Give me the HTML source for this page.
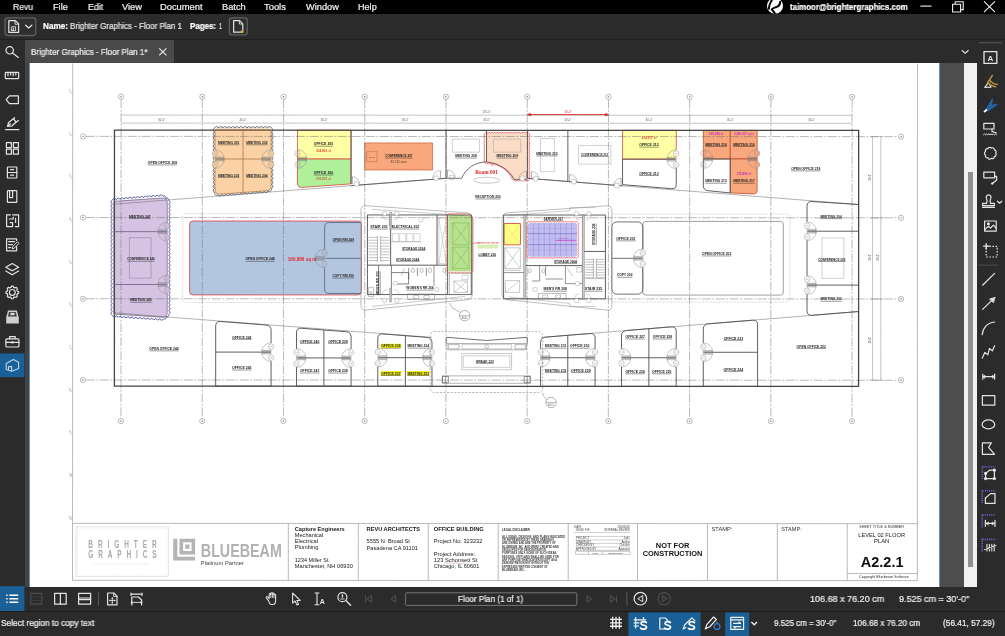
<!DOCTYPE html>
<html lang="en"><head><meta charset="utf-8"><title>Brighter Graphics - Floor Plan 1 - Revu</title>
<style>
html,body{margin:0;padding:0;background:#2b2b2b;}
body{width:1005px;height:636px;position:relative;overflow:hidden;font-family:"Liberation Sans",sans-serif;}
.abs{position:absolute;}
.ut{position:absolute;will-change:transform;-webkit-text-stroke:0.22px currentColor;white-space:pre;line-height:1;transform-origin:0 50%;display:inline-block;}
#menubar{left:0;top:0;width:1005px;height:13.5px;background:#000;}
#toolbar{left:0;top:13.5px;width:1005px;height:25px;background:#2b2b2b;}
#tbline{left:0;top:38.5px;width:1005px;height:1.4px;background:#1f1f1f;}
#tabbar{left:25px;top:40px;width:952.5px;height:23.4px;background:#2b2b2b;}
#tab{left:25px;top:39.8px;width:149px;height:23.6px;background:#4a4a4a;}
#leftpanel{left:0;top:40px;width:24.6px;height:547px;background:#2b2b2b;}
#docframe{left:24.6px;top:63.4px;width:4.2px;height:523.6px;background:#444;}
#doc{left:28.8px;top:63.4px;width:910.4px;height:523.6px;background:#fff;overflow:hidden;}
#docl{left:28.8px;top:63.4px;width:1.2px;height:523.6px;background:#5b93c4;}
#docr{left:938.8px;top:63.4px;width:1.2px;height:523.6px;background:#5b93c4;}
#grayarea{left:940px;top:63.4px;width:23.8px;height:523.6px;background:#4d4d4d;}
#vscroll{left:963.8px;top:63.4px;width:13.6px;height:523.6px;background:#f1f1f1;}
#vthumb{left:968.4px;top:171.6px;width:4.8px;height:395px;background:#909090;}
#rightpanel{left:977.4px;top:40px;width:27.6px;height:547px;background:#2b2b2b;}
#navbar{left:0;top:587px;width:1005px;height:24px;background:#2b2b2b;}
#navline{left:0;top:611px;width:1005px;height:1.4px;background:#1c1c1c;}
#statusbar{left:0;top:612.4px;width:1005px;height:23.6px;background:#2b2b2b;}
svg.ov{position:absolute;left:0;top:0;will-change:transform;}
#drawing{filter:blur(0.35px);}
</style></head>
<body>
<div class="abs" id="menubar"></div>
<div class="abs" id="toolbar"></div>
<div class="abs" id="tbline"></div>
<div class="abs" id="tabbar"></div>
<div class="abs" id="tab"></div>
<div class="abs" id="leftpanel"></div>
<div class="abs" id="docframe"></div>
<div class="abs" id="doc"></div>
<div class="abs" id="grayarea"></div>
<div class="abs" id="vscroll"></div>
<div class="abs" id="vthumb"></div>
<div class="abs" id="rightpanel"></div>
<div class="abs" id="navbar"></div>
<div class="abs" id="navline"></div>
<div class="abs" id="statusbar"></div>
<svg class="ov" id="drawing" width="1005" height="636" viewBox="0 0 1005 636">
<defs><clipPath id="docclip"><rect x="30" y="63.4" width="908.8" height="523.6"/></clipPath></defs>
<g clip-path="url(#docclip)"><g transform="rotate(0.02 502 318)">
<line x1="72.6" y1="63" x2="72.6" y2="580.6" stroke="#8c8c8c" stroke-width="0.6" />
<line x1="917.4" y1="63" x2="917.4" y2="580.6" stroke="#8c8c8c" stroke-width="0.6" />
<line x1="70.4" y1="92.8" x2="72.6" y2="92.8" stroke="#8c8c8c" stroke-width="0.5" />
<text x="69.2" y="92.2" font-family="Liberation Sans, sans-serif" font-size="2.6" fill="#777">1</text>
<line x1="70.4" y1="135.45" x2="72.6" y2="135.45" stroke="#8c8c8c" stroke-width="0.5" />
<text x="69.2" y="134.85" font-family="Liberation Sans, sans-serif" font-size="2.6" fill="#777">2</text>
<line x1="70.4" y1="178.1" x2="72.6" y2="178.1" stroke="#8c8c8c" stroke-width="0.5" />
<text x="69.2" y="177.5" font-family="Liberation Sans, sans-serif" font-size="2.6" fill="#777">3</text>
<line x1="70.4" y1="220.75" x2="72.6" y2="220.75" stroke="#8c8c8c" stroke-width="0.5" />
<text x="69.2" y="220.15" font-family="Liberation Sans, sans-serif" font-size="2.6" fill="#777">4</text>
<line x1="70.4" y1="263.4" x2="72.6" y2="263.4" stroke="#8c8c8c" stroke-width="0.5" />
<text x="69.2" y="262.8" font-family="Liberation Sans, sans-serif" font-size="2.6" fill="#777">5</text>
<line x1="70.4" y1="306.05" x2="72.6" y2="306.05" stroke="#8c8c8c" stroke-width="0.5" />
<text x="69.2" y="305.45" font-family="Liberation Sans, sans-serif" font-size="2.6" fill="#777">6</text>
<line x1="70.4" y1="348.7" x2="72.6" y2="348.7" stroke="#8c8c8c" stroke-width="0.5" />
<text x="69.2" y="348.1" font-family="Liberation Sans, sans-serif" font-size="2.6" fill="#777">7</text>
<line x1="70.4" y1="391.35" x2="72.6" y2="391.35" stroke="#8c8c8c" stroke-width="0.5" />
<text x="69.2" y="390.75" font-family="Liberation Sans, sans-serif" font-size="2.6" fill="#777">8</text>
<line x1="70.4" y1="434" x2="72.6" y2="434" stroke="#8c8c8c" stroke-width="0.5" />
<text x="69.2" y="433.4" font-family="Liberation Sans, sans-serif" font-size="2.6" fill="#777">9</text>
<line x1="70.4" y1="476.65" x2="72.6" y2="476.65" stroke="#8c8c8c" stroke-width="0.5" />
<text x="69.2" y="476.05" font-family="Liberation Sans, sans-serif" font-size="2.6" fill="#777">10</text>
<line x1="70.4" y1="519.3" x2="72.6" y2="519.3" stroke="#8c8c8c" stroke-width="0.5" />
<text x="69.2" y="518.7" font-family="Liberation Sans, sans-serif" font-size="2.6" fill="#777">11</text>
<path d="M214.9 130.6Q214.9 128.6 216.9 128.6L269.1 128.6Q271.1 128.6 271.1 130.6L271.1 185.51Q271.1 190.51 266.11 190.88L219.89 194.26Q214.9 194.62 214.9 189.62Z" fill="#fbd2a6" stroke="none" stroke-width="0" />
<rect x="297.4" y="130.3" width="53.6" height="28.8" rx="0" fill="#ffffa6" stroke="#d84a3a" stroke-width="0.8" />
<path d="M297.4 159.1L351 159.1L351 183.95L301.89 187.43Q297.4 187.75 297.4 183.25Z" fill="#b0f09a" stroke="#d84a3a" stroke-width="0.8" />
<rect x="364.6" y="143" width="67.9" height="27" rx="0" fill="#f9a77c" stroke="#cf5a3a" stroke-width="0.7" />
<path d="M486.5 133.6H527.6V179.4H514.2C509 170 499 163 486.5 162Z" fill="#fbdcc6" stroke="none" stroke-width="0" />
<rect x="622.5" y="130.3" width="53.7" height="28.8" rx="0" fill="#ffffa6" stroke="#d84a3a" stroke-width="0.8" />
<rect x="703.3" y="130.3" width="26.9" height="28.6" rx="0" fill="#f9a77c" stroke="#b9502a" stroke-width="0.8" />
<rect x="730.2" y="130.3" width="26.9" height="28.6" rx="0" fill="#f9a77c" stroke="#b9502a" stroke-width="0.8" />
<path d="M730.2 158.9L757.1 158.9L757.1 189.99Q757.1 193.99 753.1 193.83L730.2 192.87Z" fill="#f9a77c" stroke="#b9502a" stroke-width="0.8" />
<path d="M113.8 202.05Q113.8 201.55 114.3 201.51L162.21 198.11Q167.2 197.76 167.2 202.76L167.2 312.67Q167.2 317.67 162.21 317.34L114.3 314.19Q113.8 314.15 113.8 313.65Z" fill="#d6c3e3" stroke="none" stroke-width="0" />
<rect x="189.6" y="221.1" width="171.8" height="73.9" rx="3.4" fill="#b3c6e0" stroke="#d64040" stroke-width="0.8" />
<path d="M448.6 215L466.8 215Q471.8 215 471.8 220L471.8 271.2L448.6 271.2Z" fill="#b7e18d" stroke="none" stroke-width="0" />
<rect x="504" y="223.5" width="16.5" height="21.3" rx="0" fill="#ffff84" stroke="#e03a2a" stroke-width="0.8" />
<rect x="527.8" y="222.9" width="49.2" height="33.9" rx="2" fill="#c3bdf2" stroke="none" stroke-width="0" />
<rect x="477.4" y="244.4" width="21" height="4.2" rx="0" fill="#d6efb8" stroke="none" stroke-width="0" />
<line x1="121" y1="99.4" x2="121" y2="418.4" stroke="#707070" stroke-width="0.5" stroke-dasharray="9 1.6 1.8 1.6"/>
<circle cx="121" cy="96.8" r="2.6" fill="none" stroke="#777" stroke-width="0.5"/>
<circle cx="121" cy="421.1" r="2.6" fill="none" stroke="#777" stroke-width="0.5"/>
<circle cx="121" cy="96.8" r="0.7" fill="#666" stroke="none" stroke-width="0"/>
<circle cx="121" cy="421.1" r="0.7" fill="#666" stroke="none" stroke-width="0"/>
<line x1="202.23" y1="99.4" x2="202.23" y2="418.4" stroke="#707070" stroke-width="0.5" stroke-dasharray="9 1.6 1.8 1.6"/>
<circle cx="202.23" cy="96.8" r="2.6" fill="none" stroke="#777" stroke-width="0.5"/>
<circle cx="202.23" cy="421.1" r="2.6" fill="none" stroke="#777" stroke-width="0.5"/>
<circle cx="202.23" cy="96.8" r="0.7" fill="#666" stroke="none" stroke-width="0"/>
<circle cx="202.23" cy="421.1" r="0.7" fill="#666" stroke="none" stroke-width="0"/>
<line x1="283.46" y1="99.4" x2="283.46" y2="418.4" stroke="#707070" stroke-width="0.5" stroke-dasharray="9 1.6 1.8 1.6"/>
<circle cx="283.46" cy="96.8" r="2.6" fill="none" stroke="#777" stroke-width="0.5"/>
<circle cx="283.46" cy="421.1" r="2.6" fill="none" stroke="#777" stroke-width="0.5"/>
<circle cx="283.46" cy="96.8" r="0.7" fill="#666" stroke="none" stroke-width="0"/>
<circle cx="283.46" cy="421.1" r="0.7" fill="#666" stroke="none" stroke-width="0"/>
<line x1="364.69" y1="99.4" x2="364.69" y2="418.4" stroke="#707070" stroke-width="0.5" stroke-dasharray="9 1.6 1.8 1.6"/>
<circle cx="364.69" cy="96.8" r="2.6" fill="none" stroke="#777" stroke-width="0.5"/>
<circle cx="364.69" cy="421.1" r="2.6" fill="none" stroke="#777" stroke-width="0.5"/>
<circle cx="364.69" cy="96.8" r="0.7" fill="#666" stroke="none" stroke-width="0"/>
<circle cx="364.69" cy="421.1" r="0.7" fill="#666" stroke="none" stroke-width="0"/>
<line x1="445.92" y1="99.4" x2="445.92" y2="418.4" stroke="#707070" stroke-width="0.5" stroke-dasharray="9 1.6 1.8 1.6"/>
<circle cx="445.92" cy="96.8" r="2.6" fill="none" stroke="#777" stroke-width="0.5"/>
<circle cx="445.92" cy="421.1" r="2.6" fill="none" stroke="#777" stroke-width="0.5"/>
<circle cx="445.92" cy="96.8" r="0.7" fill="#666" stroke="none" stroke-width="0"/>
<circle cx="445.92" cy="421.1" r="0.7" fill="#666" stroke="none" stroke-width="0"/>
<line x1="527.15" y1="99.4" x2="527.15" y2="418.4" stroke="#707070" stroke-width="0.5" stroke-dasharray="9 1.6 1.8 1.6"/>
<circle cx="527.15" cy="96.8" r="2.6" fill="none" stroke="#777" stroke-width="0.5"/>
<circle cx="527.15" cy="421.1" r="2.6" fill="none" stroke="#777" stroke-width="0.5"/>
<circle cx="527.15" cy="96.8" r="0.7" fill="#666" stroke="none" stroke-width="0"/>
<circle cx="527.15" cy="421.1" r="0.7" fill="#666" stroke="none" stroke-width="0"/>
<line x1="608.38" y1="99.4" x2="608.38" y2="418.4" stroke="#707070" stroke-width="0.5" stroke-dasharray="9 1.6 1.8 1.6"/>
<circle cx="608.38" cy="96.8" r="2.6" fill="none" stroke="#777" stroke-width="0.5"/>
<circle cx="608.38" cy="421.1" r="2.6" fill="none" stroke="#777" stroke-width="0.5"/>
<circle cx="608.38" cy="96.8" r="0.7" fill="#666" stroke="none" stroke-width="0"/>
<circle cx="608.38" cy="421.1" r="0.7" fill="#666" stroke="none" stroke-width="0"/>
<line x1="689.61" y1="99.4" x2="689.61" y2="418.4" stroke="#707070" stroke-width="0.5" stroke-dasharray="9 1.6 1.8 1.6"/>
<circle cx="689.61" cy="96.8" r="2.6" fill="none" stroke="#777" stroke-width="0.5"/>
<circle cx="689.61" cy="421.1" r="2.6" fill="none" stroke="#777" stroke-width="0.5"/>
<circle cx="689.61" cy="96.8" r="0.7" fill="#666" stroke="none" stroke-width="0"/>
<circle cx="689.61" cy="421.1" r="0.7" fill="#666" stroke="none" stroke-width="0"/>
<line x1="770.84" y1="99.4" x2="770.84" y2="418.4" stroke="#707070" stroke-width="0.5" stroke-dasharray="9 1.6 1.8 1.6"/>
<circle cx="770.84" cy="96.8" r="2.6" fill="none" stroke="#777" stroke-width="0.5"/>
<circle cx="770.84" cy="421.1" r="2.6" fill="none" stroke="#777" stroke-width="0.5"/>
<circle cx="770.84" cy="96.8" r="0.7" fill="#666" stroke="none" stroke-width="0"/>
<circle cx="770.84" cy="421.1" r="0.7" fill="#666" stroke="none" stroke-width="0"/>
<line x1="852.07" y1="99.4" x2="852.07" y2="418.4" stroke="#707070" stroke-width="0.5" stroke-dasharray="9 1.6 1.8 1.6"/>
<circle cx="852.07" cy="96.8" r="2.6" fill="none" stroke="#777" stroke-width="0.5"/>
<circle cx="852.07" cy="421.1" r="2.6" fill="none" stroke="#777" stroke-width="0.5"/>
<circle cx="852.07" cy="96.8" r="0.7" fill="#666" stroke="none" stroke-width="0"/>
<circle cx="852.07" cy="421.1" r="0.7" fill="#666" stroke="none" stroke-width="0"/>
<line x1="85.8" y1="136.5" x2="898.2" y2="136.5" stroke="#707070" stroke-width="0.5" stroke-dasharray="9 1.6 1.8 1.6"/>
<circle cx="83" cy="136.5" r="2.6" fill="none" stroke="#777" stroke-width="0.5"/>
<circle cx="901" cy="136.5" r="2.6" fill="none" stroke="#777" stroke-width="0.5"/>
<circle cx="83" cy="136.5" r="0.7" fill="#666" stroke="none" stroke-width="0"/>
<circle cx="901" cy="136.5" r="0.7" fill="#666" stroke="none" stroke-width="0"/>
<line x1="85.8" y1="217.7" x2="898.2" y2="217.7" stroke="#707070" stroke-width="0.5" stroke-dasharray="9 1.6 1.8 1.6"/>
<circle cx="83" cy="217.7" r="2.6" fill="none" stroke="#777" stroke-width="0.5"/>
<circle cx="901" cy="217.7" r="2.6" fill="none" stroke="#777" stroke-width="0.5"/>
<circle cx="83" cy="217.7" r="0.7" fill="#666" stroke="none" stroke-width="0"/>
<circle cx="901" cy="217.7" r="0.7" fill="#666" stroke="none" stroke-width="0"/>
<line x1="85.8" y1="298.9" x2="898.2" y2="298.9" stroke="#707070" stroke-width="0.5" stroke-dasharray="9 1.6 1.8 1.6"/>
<circle cx="83" cy="298.9" r="2.6" fill="none" stroke="#777" stroke-width="0.5"/>
<circle cx="901" cy="298.9" r="2.6" fill="none" stroke="#777" stroke-width="0.5"/>
<circle cx="83" cy="298.9" r="0.7" fill="#666" stroke="none" stroke-width="0"/>
<circle cx="901" cy="298.9" r="0.7" fill="#666" stroke="none" stroke-width="0"/>
<line x1="85.8" y1="380.1" x2="898.2" y2="380.1" stroke="#707070" stroke-width="0.5" stroke-dasharray="9 1.6 1.8 1.6"/>
<circle cx="83" cy="380.1" r="2.6" fill="none" stroke="#777" stroke-width="0.5"/>
<circle cx="901" cy="380.1" r="2.6" fill="none" stroke="#777" stroke-width="0.5"/>
<circle cx="83" cy="380.1" r="0.7" fill="#666" stroke="none" stroke-width="0"/>
<circle cx="901" cy="380.1" r="0.7" fill="#666" stroke="none" stroke-width="0"/>
<line x1="121" y1="115.2" x2="852.07" y2="115.2" stroke="#888" stroke-width="0.5" />
<line x1="121" y1="123.2" x2="852.07" y2="123.2" stroke="#888" stroke-width="0.5" />
<g><text x="158.25" y="121.05" font-family="Liberation Sans, sans-serif" font-size="3" font-weight="400" fill="#555" textLength="6.72" lengthAdjust="spacingAndGlyphs">30'-0"</text></g>
<g><text x="239.49" y="121.05" font-family="Liberation Sans, sans-serif" font-size="3" font-weight="400" fill="#555" textLength="6.72" lengthAdjust="spacingAndGlyphs">30'-0"</text></g>
<g><text x="320.72" y="121.05" font-family="Liberation Sans, sans-serif" font-size="3" font-weight="400" fill="#555" textLength="6.72" lengthAdjust="spacingAndGlyphs">30'-0"</text></g>
<g><text x="401.94" y="121.05" font-family="Liberation Sans, sans-serif" font-size="3" font-weight="400" fill="#555" textLength="6.72" lengthAdjust="spacingAndGlyphs">30'-0"</text></g>
<g><text x="483.18" y="121.05" font-family="Liberation Sans, sans-serif" font-size="3" font-weight="400" fill="#555" textLength="6.72" lengthAdjust="spacingAndGlyphs">30'-0"</text></g>
<g><text x="564.41" y="121.05" font-family="Liberation Sans, sans-serif" font-size="3" font-weight="400" fill="#555" textLength="6.72" lengthAdjust="spacingAndGlyphs">30'-0"</text></g>
<g><text x="645.63" y="121.05" font-family="Liberation Sans, sans-serif" font-size="3" font-weight="400" fill="#555" textLength="6.72" lengthAdjust="spacingAndGlyphs">30'-0"</text></g>
<g><text x="726.87" y="121.05" font-family="Liberation Sans, sans-serif" font-size="3" font-weight="400" fill="#555" textLength="6.72" lengthAdjust="spacingAndGlyphs">30'-0"</text></g>
<g><text x="808.1" y="121.05" font-family="Liberation Sans, sans-serif" font-size="3" font-weight="400" fill="#555" textLength="6.72" lengthAdjust="spacingAndGlyphs">30'-0"</text></g>
<g><text x="482.58" y="113.05" font-family="Liberation Sans, sans-serif" font-size="3" font-weight="400" fill="#555" textLength="7.84" lengthAdjust="spacingAndGlyphs">270'-0"</text></g>
<line x1="872.5" y1="136.5" x2="872.5" y2="380.1" stroke="#888" stroke-width="0.5" />
<line x1="880.8" y1="136.5" x2="880.8" y2="380.1" stroke="#888" stroke-width="0.5" />
<line x1="870.5" y1="136.5" x2="883" y2="136.5" stroke="#888" stroke-width="0.5" />
<line x1="870.5" y1="217.7" x2="883" y2="217.7" stroke="#888" stroke-width="0.5" />
<line x1="870.5" y1="298.9" x2="883" y2="298.9" stroke="#888" stroke-width="0.5" />
<line x1="870.5" y1="380.1" x2="883" y2="380.1" stroke="#888" stroke-width="0.5" />
<g transform="rotate(-90 870 177)"><text x="866.64" y="177.85" font-family="Liberation Sans, sans-serif" font-size="3" font-weight="400" fill="#555" textLength="6.72" lengthAdjust="spacingAndGlyphs">30'-0"</text></g>
<g transform="rotate(-90 870 257)"><text x="866.64" y="257.85" font-family="Liberation Sans, sans-serif" font-size="3" font-weight="400" fill="#555" textLength="6.72" lengthAdjust="spacingAndGlyphs">30'-0"</text></g>
<g transform="rotate(-90 870 340)"><text x="866.64" y="340.85" font-family="Liberation Sans, sans-serif" font-size="3" font-weight="400" fill="#555" textLength="6.72" lengthAdjust="spacingAndGlyphs">30'-0"</text></g>
<g transform="rotate(-90 878.4 257)"><text x="875.04" y="257.85" font-family="Liberation Sans, sans-serif" font-size="3" font-weight="400" fill="#555" textLength="6.72" lengthAdjust="spacingAndGlyphs">90'-0"</text></g>
<line x1="527.4" y1="114.6" x2="608.4" y2="114.6" stroke="#e02020" stroke-width="0.9" />
<path d="M527.2 114.6L530.6 113.2V116Z M608.6 114.6L605.2 113.2V116Z" fill="#e02020" stroke="#e02020" stroke-width="0.4" />
<g><text x="564.4" y="113.45" font-family="Liberation Sans, sans-serif" font-size="3" font-weight="400" fill="#e03030" textLength="7.2" lengthAdjust="spacingAndGlyphs">30'-0"</text></g>
<rect x="114.4" y="130.3" width="744.2" height="256" rx="0" fill="none" stroke="#444" stroke-width="1.3" />
<line x1="114.4" y1="204.3" x2="446" y2="178.3" stroke="#666" stroke-width="0.5" />
<line x1="527.5" y1="178.3" x2="858.5" y2="204.38" stroke="#666" stroke-width="0.5" />
<line x1="114.4" y1="313" x2="432" y2="337.49" stroke="#666" stroke-width="0.5" />
<line x1="541" y1="337.5" x2="858.5" y2="311.4" stroke="#666" stroke-width="0.5" />
<path d="M214.9 130.3L271.1 130.3L271.1 185.51Q271.1 190.51 266.11 190.88L219.89 194.26Q214.9 194.62 214.9 189.62Z" fill="none" stroke="#a87848" stroke-width="0.8" />
<line x1="243" y1="130.3" x2="243" y2="192.62" stroke="#a87848" stroke-width="0.8" />
<line x1="214.9" y1="159.1" x2="271.1" y2="159.1" stroke="#a87848" stroke-width="0.8" />
<path d="M214.6 128.2A2.13 2.13 0 0 1 218.66 128.2A2.13 2.13 0 0 1 222.71 128.2A2.13 2.13 0 0 1 226.77 128.2A2.13 2.13 0 0 1 230.83 128.2A2.13 2.13 0 0 1 234.89 128.2A2.13 2.13 0 0 1 238.94 128.2A2.13 2.13 0 0 1 243 128.2A2.13 2.13 0 0 1 247.06 128.2A2.13 2.13 0 0 1 251.11 128.2A2.13 2.13 0 0 1 255.17 128.2A2.13 2.13 0 0 1 259.23 128.2A2.13 2.13 0 0 1 263.29 128.2A2.13 2.13 0 0 1 267.34 128.2A2.13 2.13 0 0 1 271.4 128.2A2.11 2.11 0 0 1 271.4 132.22A2.11 2.11 0 0 1 271.4 136.24A2.11 2.11 0 0 1 271.4 140.26A2.11 2.11 0 0 1 271.4 144.28A2.11 2.11 0 0 1 271.4 148.3A2.11 2.11 0 0 1 271.4 152.32A2.11 2.11 0 0 1 271.4 156.34A2.11 2.11 0 0 1 271.4 160.36A2.11 2.11 0 0 1 271.4 164.37A2.11 2.11 0 0 1 271.4 168.39A2.11 2.11 0 0 1 271.4 172.41A2.11 2.11 0 0 1 271.4 176.43A2.11 2.11 0 0 1 271.4 180.45A2.11 2.11 0 0 1 271.4 184.47A2.11 2.11 0 0 1 271.4 188.49A2.24 2.24 0 0 1 268 191.06A2.03 2.03 0 0 1 264.15 191.36A2.03 2.03 0 0 1 260.31 191.66A2.03 2.03 0 0 1 256.46 191.96A2.03 2.03 0 0 1 252.62 192.26A2.03 2.03 0 0 1 248.77 192.57A2.03 2.03 0 0 1 244.92 192.87A2.03 2.03 0 0 1 241.08 193.17A2.03 2.03 0 0 1 237.23 193.47A2.03 2.03 0 0 1 233.38 193.77A2.03 2.03 0 0 1 229.54 194.07A2.03 2.03 0 0 1 225.69 194.37A2.03 2.03 0 0 1 221.85 194.68A2.03 2.03 0 0 1 218 194.98A2.23 2.23 0 0 1 214.6 192.44A2.11 2.11 0 0 1 214.6 188.43A2.11 2.11 0 0 1 214.6 184.41A2.11 2.11 0 0 1 214.6 180.4A2.11 2.11 0 0 1 214.6 176.38A2.11 2.11 0 0 1 214.6 172.37A2.11 2.11 0 0 1 214.6 168.35A2.11 2.11 0 0 1 214.6 164.34A2.11 2.11 0 0 1 214.6 160.32A2.11 2.11 0 0 1 214.6 156.31A2.11 2.11 0 0 1 214.6 152.29A2.11 2.11 0 0 1 214.6 148.28A2.11 2.11 0 0 1 214.6 144.26A2.11 2.11 0 0 1 214.6 140.25A2.11 2.11 0 0 1 214.6 136.23A2.11 2.11 0 0 1 214.6 132.22A2.11 2.11 0 0 1 214.6 128.2" fill="none" stroke="#5a5262" stroke-width="0.8" />
<line x1="214.9" y1="150" x2="214.9" y2="168.2" stroke="#fbd2a6" stroke-width="1.8" /><path d="M214.9 149.7A9.4 9.4 0 0 1 214.9 168.5" fill="none" stroke="#8a8a8a" stroke-width="0.5" /><rect x="214.9" y="157.1" width="9" height="4" rx="0" fill="rgba(110,110,110,0.38)" stroke="#888" stroke-width="0.35" /><line x1="214.9" y1="159.1" x2="223.9" y2="159.1" stroke="#888" stroke-width="0.5" /><circle cx="214.9" cy="153.5" r="2.7" fill="#fbd2a6" stroke="#8a8a8a" stroke-width="0.45"/><circle cx="214.9" cy="164.7" r="2.7" fill="#fbd2a6" stroke="#8a8a8a" stroke-width="0.45"/><line x1="213.5" y1="153.5" x2="216.3" y2="153.5" stroke="#999" stroke-width="0.5" /><line x1="213.5" y1="164.7" x2="216.3" y2="164.7" stroke="#999" stroke-width="0.5" />
<line x1="271.1" y1="150" x2="271.1" y2="168.2" stroke="#fbd2a6" stroke-width="1.8" /><path d="M271.1 149.7A9.4 9.4 0 0 0 271.1 168.5" fill="none" stroke="#8a8a8a" stroke-width="0.5" /><rect x="262.1" y="157.1" width="9" height="4" rx="0" fill="rgba(110,110,110,0.38)" stroke="#888" stroke-width="0.35" /><line x1="262.1" y1="159.1" x2="271.1" y2="159.1" stroke="#888" stroke-width="0.5" /><circle cx="271.1" cy="153.5" r="2.7" fill="#fbd2a6" stroke="#8a8a8a" stroke-width="0.45"/><circle cx="271.1" cy="164.7" r="2.7" fill="#fbd2a6" stroke="#8a8a8a" stroke-width="0.45"/><line x1="269.7" y1="153.5" x2="272.5" y2="153.5" stroke="#999" stroke-width="0.5" /><line x1="269.7" y1="164.7" x2="272.5" y2="164.7" stroke="#999" stroke-width="0.5" />
<path d="M297.4 149.7A9.4 9.4 0 0 1 297.4 168.5" fill="none" stroke="#8a8a8a" stroke-width="0.5" /><rect x="297.4" y="157.1" width="9" height="4" rx="0" fill="rgba(110,110,110,0.38)" stroke="#888" stroke-width="0.35" /><line x1="297.4" y1="159.1" x2="306.4" y2="159.1" stroke="#888" stroke-width="0.5" /><circle cx="297.4" cy="153.5" r="2.7" fill="none" stroke="#8a8a8a" stroke-width="0.45"/><circle cx="297.4" cy="164.7" r="2.7" fill="none" stroke="#8a8a8a" stroke-width="0.45"/><line x1="296" y1="153.5" x2="298.8" y2="153.5" stroke="#999" stroke-width="0.5" /><line x1="296" y1="164.7" x2="298.8" y2="164.7" stroke="#999" stroke-width="0.5" />
<line x1="351" y1="130.3" x2="351" y2="183.95" stroke="#4e4e4e" stroke-width="0.9" />
<line x1="351" y1="185.75" x2="446" y2="178.3" stroke="#4e4e4e" stroke-width="0.8" />
<line x1="446" y1="130.3" x2="446" y2="178.3" stroke="#4e4e4e" stroke-width="0.9" />
<rect x="366.6" y="151.7" width="10.4" height="9.9" rx="0" fill="none" stroke="#8a5a40" stroke-width="0.4" />
<path d="M352.3 176.8A7.4 7.4 0 0 1 359.7 184.2" fill="none" stroke="#8a8a8a" stroke-width="0.5" /><line x1="352.3" y1="184.2" x2="352.3" y2="176.8" stroke="#777" stroke-width="0.6" /><circle cx="356.44" cy="184" r="2.5" fill="#fff" stroke="#8a8a8a" stroke-width="0.45"/>
<path d="M440.4 170.6A7.8 7.8 0 0 0 432.6 178.4" fill="none" stroke="#8a8a8a" stroke-width="0.5" /><line x1="440.4" y1="178.4" x2="440.4" y2="170.6" stroke="#777" stroke-width="0.6" /><circle cx="436.03" cy="178.2" r="2.5" fill="#fff" stroke="#8a8a8a" stroke-width="0.45"/>
<path d="M447.4 170A7.8 7.8 0 0 1 455.2 177.8" fill="none" stroke="#8a8a8a" stroke-width="0.5" /><line x1="447.4" y1="177.8" x2="447.4" y2="170" stroke="#777" stroke-width="0.6" /><circle cx="451.77" cy="177.6" r="2.5" fill="#fff" stroke="#8a8a8a" stroke-width="0.45"/>
<rect x="452.2" y="139.2" width="27.3" height="13" rx="0" fill="none" stroke="#999" stroke-width="0.45" />
<line x1="486.5" y1="130.3" x2="486.5" y2="162" stroke="#4e4e4e" stroke-width="0.9" />
<path d="M446 178.3 H461.6 C466 168 475 162.2 486.5 162 C499 163 509 170 514.2 179.4 H527.5" fill="none" stroke="#4e4e4e" stroke-width="0.8" />
<rect x="493.5" y="139.2" width="27.1" height="13" rx="0" fill="none" stroke="#999" stroke-width="0.45" />
<path d="M485 133.4A1.43 1.43 0 0 1 487.73 133.4A1.43 1.43 0 0 1 490.45 133.4A1.43 1.43 0 0 1 493.18 133.4A1.43 1.43 0 0 1 495.9 133.4A1.43 1.43 0 0 1 498.62 133.4A1.43 1.43 0 0 1 501.35 133.4A1.43 1.43 0 0 1 504.07 133.4A1.43 1.43 0 0 1 506.8 133.4A1.43 1.43 0 0 1 509.53 133.4A1.43 1.43 0 0 1 512.25 133.4A1.43 1.43 0 0 1 514.98 133.4A1.43 1.43 0 0 1 517.7 133.4A1.43 1.43 0 0 1 520.43 133.4A1.43 1.43 0 0 1 523.15 133.4A1.43 1.43 0 0 1 525.88 133.4A1.43 1.43 0 0 1 528.6 133.4A1.44 1.44 0 0 1 528.6 136.14A1.44 1.44 0 0 1 528.6 138.88A1.44 1.44 0 0 1 528.6 141.62A1.44 1.44 0 0 1 528.6 144.36A1.44 1.44 0 0 1 528.6 147.11A1.44 1.44 0 0 1 528.6 149.85A1.44 1.44 0 0 1 528.6 152.59A1.44 1.44 0 0 1 528.6 155.33A1.44 1.44 0 0 1 528.6 158.07A1.44 1.44 0 0 1 528.6 160.81A1.44 1.44 0 0 1 528.6 163.55A1.44 1.44 0 0 1 528.6 166.29A1.44 1.44 0 0 1 528.6 169.04A1.44 1.44 0 0 1 528.6 171.78A1.44 1.44 0 0 1 528.6 174.52A1.44 1.44 0 0 1 528.6 177.26A1.44 1.44 0 0 1 528.6 180A1.53 1.53 0 0 1 525.68 180A1.53 1.53 0 0 1 522.76 180A1.53 1.53 0 0 1 519.84 180A1.53 1.53 0 0 1 516.92 180A1.53 1.53 0 0 1 514 180A1.82 1.82 0 0 1 512.25 177A1.82 1.82 0 0 1 510.5 174A1.35 1.35 0 0 1 508.67 172.2A1.35 1.35 0 0 1 506.83 170.4A1.35 1.35 0 0 1 505 168.6A1.29 1.29 0 0 1 502.87 167.4A1.29 1.29 0 0 1 500.73 166.2A1.29 1.29 0 0 1 498.6 165A1.27 1.27 0 0 1 496.27 164.33A1.27 1.27 0 0 1 493.93 163.67A1.27 1.27 0 0 1 491.6 163A1.74 1.74 0 0 1 488.3 162.7A1.74 1.74 0 0 1 485 162.4A1.52 1.52 0 0 1 485 159.5A1.52 1.52 0 0 1 485 156.6A1.52 1.52 0 0 1 485 153.7A1.52 1.52 0 0 1 485 150.8A1.52 1.52 0 0 1 485 147.9A1.52 1.52 0 0 1 485 145A1.52 1.52 0 0 1 485 142.1A1.52 1.52 0 0 1 485 139.2A1.52 1.52 0 0 1 485 136.3A1.52 1.52 0 0 1 485 133.4" fill="none" stroke="#e02a2a" stroke-width="0.6" />
<path d="M526.4 171.2A7.4 7.4 0 0 0 519 178.6" fill="none" stroke="#8a8a8a" stroke-width="0.5" /><line x1="526.4" y1="178.6" x2="526.4" y2="171.2" stroke="#777" stroke-width="0.6" /><circle cx="522.26" cy="178.4" r="2.5" fill="#fff" stroke="#8a8a8a" stroke-width="0.45"/>
<ellipse cx="486.5" cy="180.3" rx="13" ry="3" fill="none" stroke="#888" stroke-width="0.45"/>
<line x1="492" y1="163.6" x2="492" y2="166.4" stroke="#e02a2a" stroke-width="0.6" />
<text x="475.3" y="173.6" font-family="Liberation Serif, serif" font-weight="700" font-size="6" fill="#e02020" textLength="22.4" lengthAdjust="spacingAndGlyphs">Room 001</text>
<line x1="527.5" y1="130.3" x2="527.5" y2="178.3" stroke="#4e4e4e" stroke-width="0.9" />
<line x1="567.8" y1="130.3" x2="567.8" y2="181.48" stroke="#4e4e4e" stroke-width="0.9" />
<line x1="527.5" y1="178.3" x2="622.5" y2="185.79" stroke="#4e4e4e" stroke-width="0.8" />
<rect x="540.4" y="138.5" width="13.9" height="33.1" rx="0" fill="none" stroke="#999" stroke-width="0.45" />
<rect x="578.5" y="145.4" width="32.3" height="18.7" rx="0" fill="none" stroke="#999" stroke-width="0.45" />
<path d="M531.4 171.4A7.4 7.4 0 0 1 538.8 178.8" fill="none" stroke="#8a8a8a" stroke-width="0.5" /><line x1="531.4" y1="178.8" x2="531.4" y2="171.4" stroke="#777" stroke-width="0.6" /><circle cx="535.54" cy="178.6" r="2.5" fill="#fff" stroke="#8a8a8a" stroke-width="0.45"/>
<path d="M569.6 174.4A7.4 7.4 0 0 1 577 181.8" fill="none" stroke="#8a8a8a" stroke-width="0.5" /><line x1="569.6" y1="181.8" x2="569.6" y2="174.4" stroke="#777" stroke-width="0.6" /><circle cx="573.74" cy="181.6" r="2.5" fill="#fff" stroke="#8a8a8a" stroke-width="0.45"/>
<path d="M621 178.2A7.4 7.4 0 0 0 613.6 185.6" fill="none" stroke="#8a8a8a" stroke-width="0.5" /><line x1="621" y1="185.6" x2="621" y2="178.2" stroke="#777" stroke-width="0.6" /><circle cx="616.86" cy="185.4" r="2.5" fill="#fff" stroke="#8a8a8a" stroke-width="0.45"/>
<path d="M622.5 159.1L676.2 159.1L676.2 184.52Q676.2 189.02 671.72 188.65L622.5 184.59Z" fill="none" stroke="#4e4e4e" stroke-width="0.9" />
<line x1="676.2" y1="150" x2="676.2" y2="168.2" stroke="#fff" stroke-width="1.8" /><path d="M676.2 149.7A9.4 9.4 0 0 0 676.2 168.5" fill="none" stroke="#8a8a8a" stroke-width="0.5" /><rect x="667.2" y="157.1" width="9" height="4" rx="0" fill="rgba(110,110,110,0.38)" stroke="#888" stroke-width="0.35" /><line x1="667.2" y1="159.1" x2="676.2" y2="159.1" stroke="#888" stroke-width="0.5" /><circle cx="676.2" cy="153.5" r="2.7" fill="#fff" stroke="#8a8a8a" stroke-width="0.45"/><circle cx="676.2" cy="164.7" r="2.7" fill="#fff" stroke="#8a8a8a" stroke-width="0.45"/><line x1="674.8" y1="153.5" x2="677.6" y2="153.5" stroke="#999" stroke-width="0.5" /><line x1="674.8" y1="164.7" x2="677.6" y2="164.7" stroke="#999" stroke-width="0.5" />
<path d="M703.3 158.9L730.2 158.9L730.2 192.87L707.78 190.61Q703.3 190.15 703.3 185.65Z" fill="none" stroke="#4e4e4e" stroke-width="0.9" />
<path d="M703.3 149.5A9.4 9.4 0 0 1 703.3 168.3" fill="none" stroke="#8a8a8a" stroke-width="0.5" /><rect x="703.3" y="156.9" width="9" height="4" rx="0" fill="rgba(110,110,110,0.38)" stroke="#888" stroke-width="0.35" /><line x1="703.3" y1="158.9" x2="712.3" y2="158.9" stroke="#888" stroke-width="0.5" /><circle cx="703.3" cy="153.3" r="2.7" fill="none" stroke="#8a8a8a" stroke-width="0.45"/><circle cx="703.3" cy="164.5" r="2.7" fill="none" stroke="#8a8a8a" stroke-width="0.45"/><line x1="701.9" y1="153.3" x2="704.7" y2="153.3" stroke="#999" stroke-width="0.5" /><line x1="701.9" y1="164.5" x2="704.7" y2="164.5" stroke="#999" stroke-width="0.5" />
<line x1="757.1" y1="149.8" x2="757.1" y2="168" stroke="#f9a77c" stroke-width="1.8" /><path d="M757.1 149.5A9.4 9.4 0 0 0 757.1 168.3" fill="none" stroke="#8a8a8a" stroke-width="0.5" /><rect x="748.1" y="156.9" width="9" height="4" rx="0" fill="rgba(110,110,110,0.38)" stroke="#888" stroke-width="0.35" /><line x1="748.1" y1="158.9" x2="757.1" y2="158.9" stroke="#888" stroke-width="0.5" /><circle cx="757.1" cy="153.3" r="2.7" fill="#f9a77c" stroke="#8a8a8a" stroke-width="0.45"/><circle cx="757.1" cy="164.5" r="2.7" fill="#f9a77c" stroke="#8a8a8a" stroke-width="0.45"/><line x1="755.7" y1="153.3" x2="758.5" y2="153.3" stroke="#999" stroke-width="0.5" /><line x1="755.7" y1="164.5" x2="758.5" y2="164.5" stroke="#999" stroke-width="0.5" />
<path d="M113.8 202.05Q113.8 201.55 114.3 201.51L162.21 198.11Q167.2 197.76 167.2 202.76L167.2 312.67Q167.2 317.67 162.21 317.34L114.3 314.19Q113.8 314.15 113.8 313.65Z" fill="none" stroke="#6a5a80" stroke-width="0.7" />
<line x1="113.8" y1="231.8" x2="167.2" y2="231.8" stroke="#6a5a80" stroke-width="0.8" />
<line x1="113.8" y1="284.6" x2="167.2" y2="284.6" stroke="#6a5a80" stroke-width="0.8" />
<rect x="129.4" y="237.8" width="21.6" height="40.5" rx="0" fill="none" stroke="#7a6a90" stroke-width="0.45" />
<path d="M112.4 200.26A2.05 2.05 0 0 1 116.29 199.95A2.05 2.05 0 0 1 120.18 199.65A2.05 2.05 0 0 1 124.08 199.34A2.05 2.05 0 0 1 127.97 199.04A2.05 2.05 0 0 1 131.86 198.73A2.05 2.05 0 0 1 135.75 198.43A2.05 2.05 0 0 1 139.65 198.12A2.05 2.05 0 0 1 143.54 197.82A2.05 2.05 0 0 1 147.43 197.51A2.05 2.05 0 0 1 151.32 197.21A2.05 2.05 0 0 1 155.22 196.9A2.05 2.05 0 0 1 159.11 196.59A2.05 2.05 0 0 1 163 196.29A1.85 1.85 0 0 1 165.8 198.42A1.85 1.85 0 0 1 168.6 200.55A2.07 2.07 0 0 1 168.6 204.49A2.07 2.07 0 0 1 168.6 208.42A2.07 2.07 0 0 1 168.6 212.36A2.07 2.07 0 0 1 168.6 216.29A2.07 2.07 0 0 1 168.6 220.23A2.07 2.07 0 0 1 168.6 224.16A2.07 2.07 0 0 1 168.6 228.1A2.07 2.07 0 0 1 168.6 232.03A2.07 2.07 0 0 1 168.6 235.97A2.07 2.07 0 0 1 168.6 239.91A2.07 2.07 0 0 1 168.6 243.84A2.07 2.07 0 0 1 168.6 247.78A2.07 2.07 0 0 1 168.6 251.71A2.07 2.07 0 0 1 168.6 255.65A2.07 2.07 0 0 1 168.6 259.58A2.07 2.07 0 0 1 168.6 263.52A2.07 2.07 0 0 1 168.6 267.45A2.07 2.07 0 0 1 168.6 271.39A2.07 2.07 0 0 1 168.6 275.32A2.07 2.07 0 0 1 168.6 279.26A2.07 2.07 0 0 1 168.6 283.2A2.07 2.07 0 0 1 168.6 287.13A2.07 2.07 0 0 1 168.6 291.07A2.07 2.07 0 0 1 168.6 295A2.07 2.07 0 0 1 168.6 298.94A2.07 2.07 0 0 1 168.6 302.87A2.07 2.07 0 0 1 168.6 306.81A2.07 2.07 0 0 1 168.6 310.74A2.07 2.07 0 0 1 168.6 314.68A1.73 1.73 0 0 1 166.1 316.84A1.73 1.73 0 0 1 163.6 318.99A2.07 2.07 0 0 1 159.66 318.72A2.07 2.07 0 0 1 155.72 318.45A2.07 2.07 0 0 1 151.78 318.17A2.07 2.07 0 0 1 147.85 317.9A2.07 2.07 0 0 1 143.91 317.63A2.07 2.07 0 0 1 139.97 317.36A2.07 2.07 0 0 1 136.03 317.08A2.07 2.07 0 0 1 132.09 316.81A2.07 2.07 0 0 1 128.15 316.54A2.07 2.07 0 0 1 124.22 316.26A2.07 2.07 0 0 1 120.28 315.99A2.07 2.07 0 0 1 116.34 315.72A2.07 2.07 0 0 1 112.4 315.45A2.09 2.09 0 0 1 112.4 311.47A2.09 2.09 0 0 1 112.4 307.5A2.09 2.09 0 0 1 112.4 303.53A2.09 2.09 0 0 1 112.4 299.56A2.09 2.09 0 0 1 112.4 295.59A2.09 2.09 0 0 1 112.4 291.61A2.09 2.09 0 0 1 112.4 287.64A2.09 2.09 0 0 1 112.4 283.67A2.09 2.09 0 0 1 112.4 279.7A2.09 2.09 0 0 1 112.4 275.73A2.09 2.09 0 0 1 112.4 271.75A2.09 2.09 0 0 1 112.4 267.78A2.09 2.09 0 0 1 112.4 263.81A2.09 2.09 0 0 1 112.4 259.84A2.09 2.09 0 0 1 112.4 255.87A2.09 2.09 0 0 1 112.4 251.89A2.09 2.09 0 0 1 112.4 247.92A2.09 2.09 0 0 1 112.4 243.95A2.09 2.09 0 0 1 112.4 239.98A2.09 2.09 0 0 1 112.4 236.01A2.09 2.09 0 0 1 112.4 232.03A2.09 2.09 0 0 1 112.4 228.06A2.09 2.09 0 0 1 112.4 224.09A2.09 2.09 0 0 1 112.4 220.12A2.09 2.09 0 0 1 112.4 216.14A2.09 2.09 0 0 1 112.4 212.17A2.09 2.09 0 0 1 112.4 208.2A2.09 2.09 0 0 1 112.4 204.23A2.09 2.09 0 0 1 112.4 200.26" fill="none" stroke="#3f4690" stroke-width="0.8" />
<line x1="167.2" y1="222.7" x2="167.2" y2="240.9" stroke="#d6c3e3" stroke-width="1.8" /><path d="M167.2 222.4A9.4 9.4 0 0 0 167.2 241.2" fill="none" stroke="#8a8a8a" stroke-width="0.5" /><rect x="158.2" y="229.8" width="9" height="4" rx="0" fill="rgba(110,110,110,0.38)" stroke="#888" stroke-width="0.35" /><line x1="158.2" y1="231.8" x2="167.2" y2="231.8" stroke="#888" stroke-width="0.5" /><circle cx="167.2" cy="226.2" r="2.7" fill="#d6c3e3" stroke="#8a8a8a" stroke-width="0.45"/><circle cx="167.2" cy="237.4" r="2.7" fill="#d6c3e3" stroke="#8a8a8a" stroke-width="0.45"/><line x1="165.8" y1="226.2" x2="168.6" y2="226.2" stroke="#999" stroke-width="0.5" /><line x1="165.8" y1="237.4" x2="168.6" y2="237.4" stroke="#999" stroke-width="0.5" />
<line x1="167.2" y1="275.5" x2="167.2" y2="293.7" stroke="#d6c3e3" stroke-width="1.8" /><path d="M167.2 275.2A9.4 9.4 0 0 0 167.2 294" fill="none" stroke="#8a8a8a" stroke-width="0.5" /><rect x="158.2" y="282.6" width="9" height="4" rx="0" fill="rgba(110,110,110,0.38)" stroke="#888" stroke-width="0.35" /><line x1="158.2" y1="284.6" x2="167.2" y2="284.6" stroke="#888" stroke-width="0.5" /><circle cx="167.2" cy="279" r="2.7" fill="#d6c3e3" stroke="#8a8a8a" stroke-width="0.45"/><circle cx="167.2" cy="290.2" r="2.7" fill="#d6c3e3" stroke="#8a8a8a" stroke-width="0.45"/><line x1="165.8" y1="279" x2="168.6" y2="279" stroke="#999" stroke-width="0.5" /><line x1="165.8" y1="290.2" x2="168.6" y2="290.2" stroke="#999" stroke-width="0.5" />
<path d="M361 213.7H186.8Q182.8 213.7 182.8 217.7V298.5Q182.8 302.5 186.8 302.5H361" fill="none" stroke="#909090" stroke-width="0.45" stroke-dasharray="0.8 0.8"/>
<path d="M612 213.9H786Q790 213.9 790 217.9V298Q790 302 786 302H612" fill="none" stroke="#909090" stroke-width="0.45" stroke-dasharray="0.8 0.8"/>
<path d="M361.2 222.6H329Q324.6 222.6 324.6 227V289Q324.6 293.5 329 293.5H361.2" fill="none" stroke="#55607a" stroke-width="0.8" />
<line x1="324.6" y1="258.4" x2="361" y2="258.4" stroke="#55607a" stroke-width="0.8" />
<line x1="324.6" y1="249.3" x2="324.6" y2="267.5" stroke="#b3c6e0" stroke-width="1.8" /><path d="M324.6 249A9.4 9.4 0 0 0 324.6 267.8" fill="none" stroke="#8a8a8a" stroke-width="0.5" /><rect x="315.6" y="256.4" width="9" height="4" rx="0" fill="rgba(110,110,110,0.38)" stroke="#888" stroke-width="0.35" /><line x1="315.6" y1="258.4" x2="324.6" y2="258.4" stroke="#888" stroke-width="0.5" /><circle cx="324.6" cy="252.8" r="2.7" fill="#b3c6e0" stroke="#8a8a8a" stroke-width="0.45"/><circle cx="324.6" cy="264" r="2.7" fill="#b3c6e0" stroke="#8a8a8a" stroke-width="0.45"/><line x1="323.2" y1="252.8" x2="326" y2="252.8" stroke="#999" stroke-width="0.5" /><line x1="323.2" y1="264" x2="326" y2="264" stroke="#999" stroke-width="0.5" />
<rect x="642.8" y="221.3" width="140.5" height="73.7" rx="3" fill="none" stroke="#777" stroke-width="0.7" />
<rect x="611.8" y="221.9" width="31" height="72.2" rx="5" fill="none" stroke="#4e4e4e" stroke-width="0.8" />
<line x1="611.8" y1="258.3" x2="642.8" y2="258.3" stroke="#4e4e4e" stroke-width="0.8" />
<line x1="642.8" y1="249.2" x2="642.8" y2="267.4" stroke="#fff" stroke-width="1.8" /><path d="M642.8 248.9A9.4 9.4 0 0 0 642.8 267.7" fill="none" stroke="#8a8a8a" stroke-width="0.5" /><rect x="633.8" y="256.3" width="9" height="4" rx="0" fill="rgba(110,110,110,0.38)" stroke="#888" stroke-width="0.35" /><line x1="633.8" y1="258.3" x2="642.8" y2="258.3" stroke="#888" stroke-width="0.5" /><circle cx="642.8" cy="252.7" r="2.7" fill="#fff" stroke="#8a8a8a" stroke-width="0.45"/><circle cx="642.8" cy="263.9" r="2.7" fill="#fff" stroke="#8a8a8a" stroke-width="0.45"/><line x1="641.4" y1="252.7" x2="644.2" y2="252.7" stroke="#999" stroke-width="0.5" /><line x1="641.4" y1="263.9" x2="644.2" y2="263.9" stroke="#999" stroke-width="0.5" />
<path d="M807 206.12Q807 201.12 811.99 201.44L858.5 204.38L858.5 311.4L811.98 315.23Q807 315.63 807 310.63Z" fill="none" stroke="#4e4e4e" stroke-width="0.9" />
<line x1="807" y1="231.1" x2="858.5" y2="231.1" stroke="#4e4e4e" stroke-width="0.9" />
<line x1="807" y1="285" x2="858.5" y2="285" stroke="#4e4e4e" stroke-width="0.9" />
<rect x="821.9" y="237.8" width="21.9" height="40.5" rx="0" fill="none" stroke="#999" stroke-width="0.45" />
<line x1="807" y1="222" x2="807" y2="240.2" stroke="#fff" stroke-width="1.8" /><path d="M807 221.7A9.4 9.4 0 0 1 807 240.5" fill="none" stroke="#8a8a8a" stroke-width="0.5" /><rect x="807" y="229.1" width="9" height="4" rx="0" fill="rgba(110,110,110,0.38)" stroke="#888" stroke-width="0.35" /><line x1="807" y1="231.1" x2="816" y2="231.1" stroke="#888" stroke-width="0.5" /><circle cx="807" cy="225.5" r="2.7" fill="#fff" stroke="#8a8a8a" stroke-width="0.45"/><circle cx="807" cy="236.7" r="2.7" fill="#fff" stroke="#8a8a8a" stroke-width="0.45"/><line x1="805.6" y1="225.5" x2="808.4" y2="225.5" stroke="#999" stroke-width="0.5" /><line x1="805.6" y1="236.7" x2="808.4" y2="236.7" stroke="#999" stroke-width="0.5" />
<line x1="807" y1="275.9" x2="807" y2="294.1" stroke="#fff" stroke-width="1.8" /><path d="M807 275.6A9.4 9.4 0 0 1 807 294.4" fill="none" stroke="#8a8a8a" stroke-width="0.5" /><rect x="807" y="283" width="9" height="4" rx="0" fill="rgba(110,110,110,0.38)" stroke="#888" stroke-width="0.35" /><line x1="807" y1="285" x2="816" y2="285" stroke="#888" stroke-width="0.5" /><circle cx="807" cy="279.4" r="2.7" fill="#fff" stroke="#8a8a8a" stroke-width="0.45"/><circle cx="807" cy="290.6" r="2.7" fill="#fff" stroke="#8a8a8a" stroke-width="0.45"/><line x1="805.6" y1="279.4" x2="808.4" y2="279.4" stroke="#999" stroke-width="0.5" /><line x1="805.6" y1="290.6" x2="808.4" y2="290.6" stroke="#999" stroke-width="0.5" />
<path d="M215.7 326.21Q215.7 321.21 220.69 321.59L266.11 325.1Q271.1 325.48 271.1 330.48L271.1 386.3L215.7 386.3Z" fill="none" stroke="#4e4e4e" stroke-width="0.9" /><line x1="215.7" y1="352.2" x2="271.1" y2="352.2" stroke="#4e4e4e" stroke-width="0.9" />
<line x1="271.1" y1="343.1" x2="271.1" y2="361.3" stroke="#fff" stroke-width="1.8" /><path d="M271.1 342.8A9.4 9.4 0 0 0 271.1 361.6" fill="none" stroke="#8a8a8a" stroke-width="0.5" /><rect x="262.1" y="350.2" width="9" height="4" rx="0" fill="rgba(110,110,110,0.38)" stroke="#888" stroke-width="0.35" /><line x1="262.1" y1="352.2" x2="271.1" y2="352.2" stroke="#888" stroke-width="0.5" /><circle cx="271.1" cy="346.6" r="2.7" fill="#fff" stroke="#8a8a8a" stroke-width="0.45"/><circle cx="271.1" cy="357.8" r="2.7" fill="#fff" stroke="#8a8a8a" stroke-width="0.45"/><line x1="269.7" y1="346.6" x2="272.5" y2="346.6" stroke="#999" stroke-width="0.5" /><line x1="269.7" y1="357.8" x2="272.5" y2="357.8" stroke="#999" stroke-width="0.5" />
<path d="M296.5 332.94Q296.5 327.94 301.49 328.32L346.11 331.77Q351.1 332.15 351.1 337.15L351.1 386.3L296.5 386.3Z" fill="none" stroke="#4e4e4e" stroke-width="0.9" /><line x1="323.9" y1="330.05" x2="323.9" y2="386.3" stroke="#4e4e4e" stroke-width="0.9" /><line x1="296.5" y1="358" x2="351.1" y2="358" stroke="#4e4e4e" stroke-width="0.9" />
<line x1="296.5" y1="348.9" x2="296.5" y2="367.1" stroke="#fff" stroke-width="1.8" /><path d="M296.5 348.6A9.4 9.4 0 0 1 296.5 367.4" fill="none" stroke="#8a8a8a" stroke-width="0.5" /><rect x="296.5" y="356" width="9" height="4" rx="0" fill="rgba(110,110,110,0.38)" stroke="#888" stroke-width="0.35" /><line x1="296.5" y1="358" x2="305.5" y2="358" stroke="#888" stroke-width="0.5" /><circle cx="296.5" cy="352.4" r="2.7" fill="#fff" stroke="#8a8a8a" stroke-width="0.45"/><circle cx="296.5" cy="363.6" r="2.7" fill="#fff" stroke="#8a8a8a" stroke-width="0.45"/><line x1="295.1" y1="352.4" x2="297.9" y2="352.4" stroke="#999" stroke-width="0.5" /><line x1="295.1" y1="363.6" x2="297.9" y2="363.6" stroke="#999" stroke-width="0.5" />
<line x1="351.1" y1="348.9" x2="351.1" y2="367.1" stroke="#fff" stroke-width="1.8" /><path d="M351.1 348.6A9.4 9.4 0 0 0 351.1 367.4" fill="none" stroke="#8a8a8a" stroke-width="0.5" /><rect x="342.1" y="356" width="9" height="4" rx="0" fill="rgba(110,110,110,0.38)" stroke="#888" stroke-width="0.35" /><line x1="342.1" y1="358" x2="351.1" y2="358" stroke="#888" stroke-width="0.5" /><circle cx="351.1" cy="352.4" r="2.7" fill="#fff" stroke="#8a8a8a" stroke-width="0.45"/><circle cx="351.1" cy="363.6" r="2.7" fill="#fff" stroke="#8a8a8a" stroke-width="0.45"/><line x1="349.7" y1="352.4" x2="352.5" y2="352.4" stroke="#999" stroke-width="0.5" /><line x1="349.7" y1="363.6" x2="352.5" y2="363.6" stroke="#999" stroke-width="0.5" />
<path d="M377.8 338.61Q377.8 333.61 382.79 333.99L427.01 337.4Q432 337.79 432 342.79L432 386.3L377.8 386.3Z" fill="none" stroke="#4e4e4e" stroke-width="0.9" /><line x1="405.4" y1="335.74" x2="405.4" y2="386.3" stroke="#4e4e4e" stroke-width="0.9" /><line x1="377.8" y1="357.7" x2="432" y2="357.7" stroke="#4e4e4e" stroke-width="0.9" />
<line x1="377.8" y1="348.6" x2="377.8" y2="366.8" stroke="#fff" stroke-width="1.8" /><path d="M377.8 348.3A9.4 9.4 0 0 1 377.8 367.1" fill="none" stroke="#8a8a8a" stroke-width="0.5" /><rect x="377.8" y="355.7" width="9" height="4" rx="0" fill="rgba(110,110,110,0.38)" stroke="#888" stroke-width="0.35" /><line x1="377.8" y1="357.7" x2="386.8" y2="357.7" stroke="#888" stroke-width="0.5" /><circle cx="377.8" cy="352.1" r="2.7" fill="#fff" stroke="#8a8a8a" stroke-width="0.45"/><circle cx="377.8" cy="363.3" r="2.7" fill="#fff" stroke="#8a8a8a" stroke-width="0.45"/><line x1="376.4" y1="352.1" x2="379.2" y2="352.1" stroke="#999" stroke-width="0.5" /><line x1="376.4" y1="363.3" x2="379.2" y2="363.3" stroke="#999" stroke-width="0.5" />
<line x1="432" y1="348.6" x2="432" y2="366.8" stroke="#fff" stroke-width="1.8" /><path d="M432 348.3A9.4 9.4 0 0 0 432 367.1" fill="none" stroke="#8a8a8a" stroke-width="0.5" /><rect x="423" y="355.7" width="9" height="4" rx="0" fill="rgba(110,110,110,0.38)" stroke="#888" stroke-width="0.35" /><line x1="423" y1="357.7" x2="432" y2="357.7" stroke="#888" stroke-width="0.5" /><circle cx="432" cy="352.1" r="2.7" fill="#fff" stroke="#8a8a8a" stroke-width="0.45"/><circle cx="432" cy="363.3" r="2.7" fill="#fff" stroke="#8a8a8a" stroke-width="0.45"/><line x1="430.6" y1="352.1" x2="433.4" y2="352.1" stroke="#999" stroke-width="0.5" /><line x1="430.6" y1="363.3" x2="433.4" y2="363.3" stroke="#999" stroke-width="0.5" />
<path d="M540.6 342.53Q540.6 337.53 545.58 337.12L590.12 333.46Q595.1 333.05 595.1 338.05L595.1 386.3L540.6 386.3Z" fill="none" stroke="#4e4e4e" stroke-width="0.9" /><line x1="567.8" y1="335.3" x2="567.8" y2="386.3" stroke="#4e4e4e" stroke-width="0.9" /><line x1="540.6" y1="357.7" x2="595.1" y2="357.7" stroke="#4e4e4e" stroke-width="0.9" />
<line x1="540.6" y1="348.6" x2="540.6" y2="366.8" stroke="#fff" stroke-width="1.8" /><path d="M540.6 348.3A9.4 9.4 0 0 1 540.6 367.1" fill="none" stroke="#8a8a8a" stroke-width="0.5" /><rect x="540.6" y="355.7" width="9" height="4" rx="0" fill="rgba(110,110,110,0.38)" stroke="#888" stroke-width="0.35" /><line x1="540.6" y1="357.7" x2="549.6" y2="357.7" stroke="#888" stroke-width="0.5" /><circle cx="540.6" cy="352.1" r="2.7" fill="#fff" stroke="#8a8a8a" stroke-width="0.45"/><circle cx="540.6" cy="363.3" r="2.7" fill="#fff" stroke="#8a8a8a" stroke-width="0.45"/><line x1="539.2" y1="352.1" x2="542" y2="352.1" stroke="#999" stroke-width="0.5" /><line x1="539.2" y1="363.3" x2="542" y2="363.3" stroke="#999" stroke-width="0.5" />
<line x1="595.1" y1="348.6" x2="595.1" y2="366.8" stroke="#fff" stroke-width="1.8" /><path d="M595.1 348.3A9.4 9.4 0 0 0 595.1 367.1" fill="none" stroke="#8a8a8a" stroke-width="0.5" /><rect x="586.1" y="355.7" width="9" height="4" rx="0" fill="rgba(110,110,110,0.38)" stroke="#888" stroke-width="0.35" /><line x1="586.1" y1="357.7" x2="595.1" y2="357.7" stroke="#888" stroke-width="0.5" /><circle cx="595.1" cy="352.1" r="2.7" fill="#fff" stroke="#8a8a8a" stroke-width="0.45"/><circle cx="595.1" cy="363.3" r="2.7" fill="#fff" stroke="#8a8a8a" stroke-width="0.45"/><line x1="593.7" y1="352.1" x2="596.5" y2="352.1" stroke="#999" stroke-width="0.5" /><line x1="593.7" y1="363.3" x2="596.5" y2="363.3" stroke="#999" stroke-width="0.5" />
<path d="M621.5 335.88Q621.5 330.88 626.48 330.47L671.22 326.8Q676.2 326.39 676.2 331.39L676.2 386.3L621.5 386.3Z" fill="none" stroke="#4e4e4e" stroke-width="0.9" /><line x1="648.9" y1="328.63" x2="648.9" y2="386.3" stroke="#4e4e4e" stroke-width="0.9" /><line x1="621.5" y1="357.7" x2="676.2" y2="357.7" stroke="#4e4e4e" stroke-width="0.9" />
<line x1="621.5" y1="348.6" x2="621.5" y2="366.8" stroke="#fff" stroke-width="1.8" /><path d="M621.5 348.3A9.4 9.4 0 0 1 621.5 367.1" fill="none" stroke="#8a8a8a" stroke-width="0.5" /><rect x="621.5" y="355.7" width="9" height="4" rx="0" fill="rgba(110,110,110,0.38)" stroke="#888" stroke-width="0.35" /><line x1="621.5" y1="357.7" x2="630.5" y2="357.7" stroke="#888" stroke-width="0.5" /><circle cx="621.5" cy="352.1" r="2.7" fill="#fff" stroke="#8a8a8a" stroke-width="0.45"/><circle cx="621.5" cy="363.3" r="2.7" fill="#fff" stroke="#8a8a8a" stroke-width="0.45"/><line x1="620.1" y1="352.1" x2="622.9" y2="352.1" stroke="#999" stroke-width="0.5" /><line x1="620.1" y1="363.3" x2="622.9" y2="363.3" stroke="#999" stroke-width="0.5" />
<line x1="676.2" y1="348.6" x2="676.2" y2="366.8" stroke="#fff" stroke-width="1.8" /><path d="M676.2 348.3A9.4 9.4 0 0 0 676.2 367.1" fill="none" stroke="#8a8a8a" stroke-width="0.5" /><rect x="667.2" y="355.7" width="9" height="4" rx="0" fill="rgba(110,110,110,0.38)" stroke="#888" stroke-width="0.35" /><line x1="667.2" y1="357.7" x2="676.2" y2="357.7" stroke="#888" stroke-width="0.5" /><circle cx="676.2" cy="352.1" r="2.7" fill="#fff" stroke="#8a8a8a" stroke-width="0.45"/><circle cx="676.2" cy="363.3" r="2.7" fill="#fff" stroke="#8a8a8a" stroke-width="0.45"/><line x1="674.8" y1="352.1" x2="677.6" y2="352.1" stroke="#999" stroke-width="0.5" /><line x1="674.8" y1="363.3" x2="677.6" y2="363.3" stroke="#999" stroke-width="0.5" />
<path d="M703.3 329.16Q703.3 324.16 708.28 323.75L752.62 320.11Q757.6 319.7 757.6 324.7L757.6 386.3L703.3 386.3Z" fill="none" stroke="#4e4e4e" stroke-width="0.9" /><line x1="703.3" y1="352.2" x2="757.6" y2="352.2" stroke="#4e4e4e" stroke-width="0.9" />
<line x1="703.3" y1="343.1" x2="703.3" y2="361.3" stroke="#fff" stroke-width="1.8" /><path d="M703.3 342.8A9.4 9.4 0 0 1 703.3 361.6" fill="none" stroke="#8a8a8a" stroke-width="0.5" /><rect x="703.3" y="350.2" width="9" height="4" rx="0" fill="rgba(110,110,110,0.38)" stroke="#888" stroke-width="0.35" /><line x1="703.3" y1="352.2" x2="712.3" y2="352.2" stroke="#888" stroke-width="0.5" /><circle cx="703.3" cy="346.6" r="2.7" fill="#fff" stroke="#8a8a8a" stroke-width="0.45"/><circle cx="703.3" cy="357.8" r="2.7" fill="#fff" stroke="#8a8a8a" stroke-width="0.45"/><line x1="701.9" y1="346.6" x2="704.7" y2="346.6" stroke="#999" stroke-width="0.5" /><line x1="701.9" y1="357.8" x2="704.7" y2="357.8" stroke="#999" stroke-width="0.5" />
<rect x="430.2" y="331.6" width="112.5" height="60.9" rx="4" fill="none" stroke="#777" stroke-width="0.5" stroke-dasharray="2.2 1.4"/>
<path d="M446.4 337.3L486.7 340.5L527.3 337.3" fill="none" stroke="#4e4e4e" stroke-width="0.8" />
<path d="M446.4 337.3V343.4M527.3 337.3V343.4" fill="none" stroke="#4e4e4e" stroke-width="0.6" />
<rect x="446.9" y="343.5" width="79.6" height="6.3" rx="0" fill="none" stroke="#666" stroke-width="0.5" />
<rect x="448.4" y="344.6" width="10.6" height="4.2" rx="0" fill="none" stroke="#666" stroke-width="0.45" />
<rect x="515" y="344.6" width="10.4" height="4.2" rx="0" fill="none" stroke="#666" stroke-width="0.45" />
<rect x="462" y="344.6" width="49.6" height="4.2" rx="0" fill="none" stroke="#888" stroke-width="0.4" />
<circle cx="486.7" cy="346.6" r="1.8" fill="none" stroke="#666" stroke-width="0.4"/>
<rect x="461.8" y="353.5" width="49.8" height="16.2" rx="0" fill="none" stroke="#888" stroke-width="0.45" />
<rect x="463.4" y="355.8" width="46.6" height="11.6" rx="0" fill="none" stroke="#888" stroke-width="0.4" />
<rect x="442.4" y="375.9" width="87.8" height="7.4" rx="0" fill="none" stroke="#666" stroke-width="0.5" />
<rect x="442.4" y="376.4" width="6" height="6.4" rx="0" fill="none" stroke="#4e4e4e" stroke-width="0.6" />
<rect x="524.2" y="376.4" width="6" height="6.4" rx="0" fill="none" stroke="#4e4e4e" stroke-width="0.6" />
<line x1="445.4" y1="376.4" x2="445.4" y2="382.8" stroke="#4e4e4e" stroke-width="0.5" />
<line x1="527.2" y1="376.4" x2="527.2" y2="382.8" stroke="#4e4e4e" stroke-width="0.5" />
<circle cx="464.7" cy="315.6" r="5.2" fill="none" stroke="#666" stroke-width="0.5"/>
<line x1="459.6" y1="315.6" x2="469.8" y2="315.6" stroke="#666" stroke-width="0.4" />
<path d="M460.4 312.4L452 307.6L449.6 303" fill="none" stroke="#666" stroke-width="0.45" />
<circle cx="551" cy="402.5" r="5.2" fill="none" stroke="#666" stroke-width="0.5"/>
<line x1="545.9" y1="402.5" x2="556.1" y2="402.5" stroke="#666" stroke-width="0.4" />
<path d="M546.8 399.4L543.6 396.4L542.6 392.6" fill="none" stroke="#666" stroke-width="0.45" />
<g><text x="462.07" y="318.85" font-family="Liberation Sans, sans-serif" font-size="2.6" font-weight="400" fill="#555" textLength="5.25" lengthAdjust="spacingAndGlyphs">A5.01</text></g>
<g><text x="548.38" y="405.65" font-family="Liberation Sans, sans-serif" font-size="2.6" font-weight="400" fill="#555" textLength="5.25" lengthAdjust="spacingAndGlyphs">A5.01</text></g>
<path d="M361 210.4Q361 205.4 365.99 205.75L466.41 212.78Q472.4 213.2 472.4 219.2L472.4 293.2Q472.4 299.2 466.43 299.81L365.97 310.09Q361 310.6 361 305.6Z" fill="none" stroke="#8e8e8e" stroke-width="0.6" />
<line x1="372" y1="209.4" x2="465" y2="215.6" stroke="#8e8e8e" stroke-width="0.45" />
<line x1="372" y1="306.4" x2="465" y2="296.4" stroke="#8e8e8e" stroke-width="0.45" />
<rect x="367.4" y="215" width="80.2" height="79.6" rx="0" fill="none" stroke="#4e4e4e" stroke-width="0.9" />
<path d="M447.6 215H471.6V294.6H447.6" fill="none" stroke="#4e4e4e" stroke-width="0.8" />
<line x1="367.4" y1="265.2" x2="447.6" y2="265.2" stroke="#4e4e4e" stroke-width="0.9" />
<line x1="390.6" y1="215" x2="390.6" y2="265.2" stroke="#4e4e4e" stroke-width="0.9" />
<line x1="437" y1="215" x2="437" y2="265.2" stroke="#4e4e4e" stroke-width="0.9" />
<line x1="389.4" y1="215" x2="389.4" y2="226" stroke="#4e4e4e" stroke-width="0.6" />
<line x1="368.6" y1="237.4" x2="377.4" y2="237.4" stroke="#666" stroke-width="0.4" />
<line x1="380.6" y1="237.4" x2="389.4" y2="237.4" stroke="#666" stroke-width="0.4" />
<line x1="368.6" y1="240.3" x2="377.4" y2="240.3" stroke="#666" stroke-width="0.4" />
<line x1="380.6" y1="240.3" x2="389.4" y2="240.3" stroke="#666" stroke-width="0.4" />
<line x1="368.6" y1="243.2" x2="377.4" y2="243.2" stroke="#666" stroke-width="0.4" />
<line x1="380.6" y1="243.2" x2="389.4" y2="243.2" stroke="#666" stroke-width="0.4" />
<line x1="368.6" y1="246.1" x2="377.4" y2="246.1" stroke="#666" stroke-width="0.4" />
<line x1="380.6" y1="246.1" x2="389.4" y2="246.1" stroke="#666" stroke-width="0.4" />
<line x1="368.6" y1="249" x2="377.4" y2="249" stroke="#666" stroke-width="0.4" />
<line x1="380.6" y1="249" x2="389.4" y2="249" stroke="#666" stroke-width="0.4" />
<line x1="368.6" y1="251.9" x2="377.4" y2="251.9" stroke="#666" stroke-width="0.4" />
<line x1="380.6" y1="251.9" x2="389.4" y2="251.9" stroke="#666" stroke-width="0.4" />
<line x1="368.6" y1="254.8" x2="377.4" y2="254.8" stroke="#666" stroke-width="0.4" />
<line x1="380.6" y1="254.8" x2="389.4" y2="254.8" stroke="#666" stroke-width="0.4" />
<line x1="368.6" y1="257.7" x2="377.4" y2="257.7" stroke="#666" stroke-width="0.4" />
<line x1="380.6" y1="257.7" x2="389.4" y2="257.7" stroke="#666" stroke-width="0.4" />
<line x1="368.6" y1="260.6" x2="377.4" y2="260.6" stroke="#666" stroke-width="0.4" />
<line x1="380.6" y1="260.6" x2="389.4" y2="260.6" stroke="#666" stroke-width="0.4" />
<line x1="377.4" y1="236" x2="377.4" y2="262" stroke="#666" stroke-width="0.45" />
<line x1="380.6" y1="236" x2="380.6" y2="262" stroke="#666" stroke-width="0.45" />
<rect x="392.4" y="233.6" width="6" height="8" rx="0" fill="none" stroke="#999" stroke-width="0.4" />
<rect x="399.6" y="233.6" width="6" height="8" rx="0" fill="none" stroke="#999" stroke-width="0.4" />
<rect x="406.8" y="233.6" width="6" height="8" rx="0" fill="none" stroke="#999" stroke-width="0.4" />
<rect x="414" y="233.6" width="6" height="8" rx="0" fill="none" stroke="#999" stroke-width="0.4" />
<line x1="391" y1="241.8" x2="421" y2="241.8" stroke="#888" stroke-width="0.4" />
<rect x="438.8" y="218" width="7.6" height="45.6" rx="0" fill="none" stroke="#999" stroke-width="0.4" /><line x1="438.8" y1="218" x2="446.4" y2="263.6" stroke="#999" stroke-width="0.36" /><line x1="438.8" y1="263.6" x2="446.4" y2="218" stroke="#999" stroke-width="0.36" />
<rect x="452.6" y="223" width="16.4" height="21.8" rx="0" fill="none" stroke="#7fae5a" stroke-width="0.5" /><line x1="452.6" y1="223" x2="469" y2="244.8" stroke="#7fae5a" stroke-width="0.45" /><line x1="452.6" y1="244.8" x2="469" y2="223" stroke="#7fae5a" stroke-width="0.45" />
<rect x="452.6" y="247.2" width="16.4" height="21.4" rx="0" fill="none" stroke="#7fae5a" stroke-width="0.5" /><line x1="452.6" y1="247.2" x2="469" y2="268.6" stroke="#7fae5a" stroke-width="0.45" /><line x1="452.6" y1="268.6" x2="469" y2="247.2" stroke="#7fae5a" stroke-width="0.45" />
<path d="M448 214.4A1.31 1.31 0 0 1 450.5 214.4A1.31 1.31 0 0 1 453 214.4A1.31 1.31 0 0 1 455.5 214.4A1.31 1.31 0 0 1 458 214.4A1.31 1.31 0 0 1 460.5 214.4A1.31 1.31 0 0 1 463 214.4A1.31 1.31 0 0 1 465.5 214.4A1.31 1.31 0 0 1 468 214.4A1.67 1.67 0 0 1 470.2 216.7A1.67 1.67 0 0 1 472.4 219A1.39 1.39 0 0 1 472.4 221.64A1.39 1.39 0 0 1 472.4 224.28A1.39 1.39 0 0 1 472.4 226.92A1.39 1.39 0 0 1 472.4 229.56A1.39 1.39 0 0 1 472.4 232.2A1.39 1.39 0 0 1 472.4 234.84A1.39 1.39 0 0 1 472.4 237.48A1.39 1.39 0 0 1 472.4 240.12A1.39 1.39 0 0 1 472.4 242.76A1.39 1.39 0 0 1 472.4 245.4A1.39 1.39 0 0 1 472.4 248.04A1.39 1.39 0 0 1 472.4 250.68A1.39 1.39 0 0 1 472.4 253.32A1.39 1.39 0 0 1 472.4 255.96A1.39 1.39 0 0 1 472.4 258.6A1.39 1.39 0 0 1 472.4 261.24A1.39 1.39 0 0 1 472.4 263.88A1.39 1.39 0 0 1 472.4 266.52A1.39 1.39 0 0 1 472.4 269.16A1.39 1.39 0 0 1 472.4 271.8A1.42 1.42 0 0 1 469.69 271.8A1.42 1.42 0 0 1 466.98 271.8A1.42 1.42 0 0 1 464.27 271.8A1.42 1.42 0 0 1 461.56 271.8A1.42 1.42 0 0 1 458.84 271.8A1.42 1.42 0 0 1 456.13 271.8A1.42 1.42 0 0 1 453.42 271.8A1.42 1.42 0 0 1 450.71 271.8A1.42 1.42 0 0 1 448 271.8A1.37 1.37 0 0 1 448 269.19A1.37 1.37 0 0 1 448 266.58A1.37 1.37 0 0 1 448 263.97A1.37 1.37 0 0 1 448 261.36A1.37 1.37 0 0 1 448 258.75A1.37 1.37 0 0 1 448 256.15A1.37 1.37 0 0 1 448 253.54A1.37 1.37 0 0 1 448 250.93A1.37 1.37 0 0 1 448 248.32A1.37 1.37 0 0 1 448 245.71A1.37 1.37 0 0 1 448 243.1A1.37 1.37 0 0 1 448 240.49A1.37 1.37 0 0 1 448 237.88A1.37 1.37 0 0 1 448 235.27A1.37 1.37 0 0 1 448 232.66A1.37 1.37 0 0 1 448 230.05A1.37 1.37 0 0 1 448 227.45A1.37 1.37 0 0 1 448 224.84A1.37 1.37 0 0 1 448 222.23A1.37 1.37 0 0 1 448 219.62A1.37 1.37 0 0 1 448 217.01A1.37 1.37 0 0 1 448 214.4" fill="none" stroke="#e03a2a" stroke-width="0.55" />
<rect x="449.4" y="273.4" width="21.6" height="21" rx="0" fill="none" stroke="#777" stroke-width="0.5" />
<rect x="454" y="281" width="13.4" height="11.4" rx="0" fill="none" stroke="#888" stroke-width="0.45" /><line x1="454" y1="281" x2="467.4" y2="292.4" stroke="#888" stroke-width="0.41" /><line x1="454" y1="292.4" x2="467.4" y2="281" stroke="#888" stroke-width="0.41" />
<rect x="462" y="275" width="6" height="4.6" rx="0" fill="none" stroke="#999" stroke-width="0.4" />
<line x1="378.6" y1="265.2" x2="378.6" y2="294.6" stroke="#4e4e4e" stroke-width="0.7" />
<line x1="391.4" y1="265.2" x2="391.4" y2="294.6" stroke="#4e4e4e" stroke-width="0.7" />
<path d="M391.4 272.6H408.6V284H396.4" fill="none" stroke="#4e4e4e" stroke-width="0.7" />
<path d="M408.6 268V279.4M417.4 268V276M426.4 268V276M434 265.2V286" fill="none" stroke="#4e4e4e" stroke-width="0.6" />
<ellipse cx="412.8" cy="270.4" rx="1.6" ry="2.2" fill="none" stroke="#777" stroke-width="0.45"/>
<ellipse cx="421.6" cy="270.4" rx="1.6" ry="2.2" fill="none" stroke="#777" stroke-width="0.45"/>
<ellipse cx="430" cy="270.4" rx="1.6" ry="2.2" fill="none" stroke="#777" stroke-width="0.45"/>
<ellipse cx="444.4" cy="270.4" rx="1.6" ry="2.2" fill="none" stroke="#777" stroke-width="0.45"/>
<rect x="407.4" y="294" width="27.2" height="5.6" rx="0" fill="none" stroke="#777" stroke-width="0.5" />
<rect x="413.6" y="295.4" width="5" height="3.2" rx="0" fill="none" stroke="#777" stroke-width="0.4" />
<rect x="424" y="295.4" width="5" height="3.2" rx="0" fill="none" stroke="#777" stroke-width="0.4" />
<rect x="368.6" y="287.4" width="5" height="9.2" rx="0" fill="none" stroke="#777" stroke-width="0.45" />
<circle cx="371" cy="292.8" r="1.3" fill="none" stroke="#777" stroke-width="0.4"/>
<circle cx="384.6" cy="213.6" r="2.2" fill="#fff" stroke="#8a8a8a" stroke-width="0.4"/>
<circle cx="396.8" cy="213.6" r="2.2" fill="#fff" stroke="#8a8a8a" stroke-width="0.4"/>
<circle cx="420.8" cy="219.8" r="2.2" fill="#fff" stroke="#8a8a8a" stroke-width="0.4"/>
<circle cx="384.6" cy="300.6" r="2.2" fill="#fff" stroke="#8a8a8a" stroke-width="0.4"/>
<circle cx="396.8" cy="300.6" r="2.2" fill="#fff" stroke="#8a8a8a" stroke-width="0.4"/>
<circle cx="395.4" cy="283.4" r="2.2" fill="#fff" stroke="#8a8a8a" stroke-width="0.4"/>
<circle cx="436.8" cy="289.6" r="2.2" fill="#fff" stroke="#8a8a8a" stroke-width="0.4"/>
<path d="M382.4 215A5 5 0 0 0 387.4 220M399 215A5 5 0 0 1 394 220" fill="none" stroke="#8a8a8a" stroke-width="0.4" />
<path d="M382.4 294.6A5 5 0 0 1 387.4 289.6M399 294.6A5 5 0 0 0 394 289.6" fill="none" stroke="#8a8a8a" stroke-width="0.4" />
<rect x="389.6" y="212" width="2" height="17.6" rx="0" fill="#bbb" stroke="#777" stroke-width="0.3" />
<rect x="389.6" y="288" width="2" height="14" rx="0" fill="#bbb" stroke="#777" stroke-width="0.3" />
<path d="M401 275.6L404.6 268.4" fill="none" stroke="#777" stroke-width="0.4" />
<path d="M502 219.2Q502 213.2 507.98 212.77L606.81 205.75Q611.8 205.4 611.8 210.4L611.8 305.6Q611.8 310.6 606.83 310.08L507.97 299.82Q502 299.2 502 293.2Z" fill="none" stroke="#8e8e8e" stroke-width="0.6" />
<line x1="509" y1="215.4" x2="570" y2="210.6" stroke="#8e8e8e" stroke-width="0.45" />
<line x1="509" y1="297" x2="570" y2="303.4" stroke="#8e8e8e" stroke-width="0.45" />
<path d="M570 210.6V207.6H595.6M570 303.4V306.4H595.6" fill="none" stroke="#8e8e8e" stroke-width="0.45" />
<rect x="503.6" y="215" width="101.8" height="83.8" rx="0" fill="none" stroke="#4e4e4e" stroke-width="0.9" />
<rect x="523.8" y="215" width="2" height="83.8" rx="0" fill="#ddd" stroke="#4e4e4e" stroke-width="0.5" />
<rect x="582.4" y="215" width="1.8" height="83.8" rx="0" fill="#ddd" stroke="#4e4e4e" stroke-width="0.5" />
<line x1="525.8" y1="265.6" x2="582.4" y2="265.6" stroke="#4e4e4e" stroke-width="0.9" />
<line x1="584.2" y1="251.4" x2="605.4" y2="251.4" stroke="#4e4e4e" stroke-width="0.9" />
<line x1="503.6" y1="272.6" x2="523.8" y2="272.6" stroke="#4e4e4e" stroke-width="0.6" />
<line x1="504.4" y1="223.8" x2="520.2" y2="244.6" stroke="#e6d27a" stroke-width="0.5" />
<line x1="504.4" y1="244.6" x2="520.2" y2="223.8" stroke="#e6d27a" stroke-width="0.5" />
<rect x="504.8" y="247.8" width="15.6" height="20.8" rx="0" fill="none" stroke="#888" stroke-width="0.45" /><line x1="504.8" y1="247.8" x2="520.4" y2="268.6" stroke="#888" stroke-width="0.41" /><line x1="504.8" y1="268.6" x2="520.4" y2="247.8" stroke="#888" stroke-width="0.41" />
<line x1="504.8" y1="270.4" x2="520.4" y2="270.4" stroke="#888" stroke-width="0.45" />
<rect x="505.4" y="280.6" width="14.2" height="11.8" rx="0" fill="none" stroke="#888" stroke-width="0.45" />
<line x1="505.4" y1="292.4" x2="519.6" y2="280.6" stroke="#888" stroke-width="0.4" />
<line x1="533.27" y1="223.2" x2="533.27" y2="256.6" stroke="#7b78c8" stroke-width="0.4" />
<line x1="538.74" y1="223.2" x2="538.74" y2="256.6" stroke="#7b78c8" stroke-width="0.4" />
<line x1="544.21" y1="223.2" x2="544.21" y2="256.6" stroke="#7b78c8" stroke-width="0.4" />
<line x1="549.68" y1="223.2" x2="549.68" y2="256.6" stroke="#7b78c8" stroke-width="0.4" />
<line x1="555.15" y1="223.2" x2="555.15" y2="256.6" stroke="#7b78c8" stroke-width="0.4" />
<line x1="560.62" y1="223.2" x2="560.62" y2="256.6" stroke="#7b78c8" stroke-width="0.4" />
<line x1="566.09" y1="223.2" x2="566.09" y2="256.6" stroke="#7b78c8" stroke-width="0.4" />
<line x1="571.56" y1="223.2" x2="571.56" y2="256.6" stroke="#7b78c8" stroke-width="0.4" />
<line x1="528" y1="233.6" x2="577" y2="233.6" stroke="#5d5ab0" stroke-width="0.5" />
<line x1="528" y1="244.6" x2="577" y2="244.6" stroke="#5d5ab0" stroke-width="0.5" />
<line x1="528" y1="228.4" x2="577" y2="228.4" stroke="#9a97dc" stroke-width="0.3" />
<line x1="528" y1="239" x2="577" y2="239" stroke="#9a97dc" stroke-width="0.3" />
<line x1="528" y1="250.4" x2="577" y2="250.4" stroke="#9a97dc" stroke-width="0.3" />
<path d="M527.4 222.4A1.39 1.39 0 0 1 530.04 222.4A1.39 1.39 0 0 1 532.68 222.4A1.39 1.39 0 0 1 535.33 222.4A1.39 1.39 0 0 1 537.97 222.4A1.39 1.39 0 0 1 540.61 222.4A1.39 1.39 0 0 1 543.25 222.4A1.39 1.39 0 0 1 545.89 222.4A1.39 1.39 0 0 1 548.54 222.4A1.39 1.39 0 0 1 551.18 222.4A1.39 1.39 0 0 1 553.82 222.4A1.39 1.39 0 0 1 556.46 222.4A1.39 1.39 0 0 1 559.11 222.4A1.39 1.39 0 0 1 561.75 222.4A1.39 1.39 0 0 1 564.39 222.4A1.39 1.39 0 0 1 567.03 222.4A1.39 1.39 0 0 1 569.67 222.4A1.39 1.39 0 0 1 572.32 222.4A1.39 1.39 0 0 1 574.96 222.4A1.39 1.39 0 0 1 577.6 222.4A1.41 1.41 0 0 1 577.6 225.08A1.41 1.41 0 0 1 577.6 227.75A1.41 1.41 0 0 1 577.6 230.43A1.41 1.41 0 0 1 577.6 233.11A1.41 1.41 0 0 1 577.6 235.78A1.41 1.41 0 0 1 577.6 238.46A1.41 1.41 0 0 1 577.6 241.14A1.41 1.41 0 0 1 577.6 243.82A1.41 1.41 0 0 1 577.6 246.49A1.41 1.41 0 0 1 577.6 249.17A1.41 1.41 0 0 1 577.6 251.85A1.41 1.41 0 0 1 577.6 254.52A1.41 1.41 0 0 1 577.6 257.2A1.39 1.39 0 0 1 574.96 257.2A1.39 1.39 0 0 1 572.32 257.2A1.39 1.39 0 0 1 569.67 257.2A1.39 1.39 0 0 1 567.03 257.2A1.39 1.39 0 0 1 564.39 257.2A1.39 1.39 0 0 1 561.75 257.2A1.39 1.39 0 0 1 559.11 257.2A1.39 1.39 0 0 1 556.46 257.2A1.39 1.39 0 0 1 553.82 257.2A1.39 1.39 0 0 1 551.18 257.2A1.39 1.39 0 0 1 548.54 257.2A1.39 1.39 0 0 1 545.89 257.2A1.39 1.39 0 0 1 543.25 257.2A1.39 1.39 0 0 1 540.61 257.2A1.39 1.39 0 0 1 537.97 257.2A1.39 1.39 0 0 1 535.33 257.2A1.39 1.39 0 0 1 532.68 257.2A1.39 1.39 0 0 1 530.04 257.2A1.39 1.39 0 0 1 527.4 257.2A1.41 1.41 0 0 1 527.4 254.52A1.41 1.41 0 0 1 527.4 251.85A1.41 1.41 0 0 1 527.4 249.17A1.41 1.41 0 0 1 527.4 246.49A1.41 1.41 0 0 1 527.4 243.82A1.41 1.41 0 0 1 527.4 241.14A1.41 1.41 0 0 1 527.4 238.46A1.41 1.41 0 0 1 527.4 235.78A1.41 1.41 0 0 1 527.4 233.11A1.41 1.41 0 0 1 527.4 230.43A1.41 1.41 0 0 1 527.4 227.75A1.41 1.41 0 0 1 527.4 225.08A1.41 1.41 0 0 1 527.4 222.4" fill="none" stroke="#e02a2a" stroke-width="0.55" />
<line x1="555.6" y1="240.4" x2="575.6" y2="240.4" stroke="#c03ac0" stroke-width="0.7" />
<g><text x="557.88" y="239.25" font-family="Liberation Sans, sans-serif" font-size="1.8" font-weight="400" fill="#c03ac0" textLength="11.05" lengthAdjust="spacingAndGlyphs">Hatch Pattern</text></g>
<line x1="585.2" y1="259.4" x2="593.4" y2="259.4" stroke="#666" stroke-width="0.4" />
<line x1="596.4" y1="259.4" x2="604.4" y2="259.4" stroke="#666" stroke-width="0.4" />
<line x1="585.2" y1="262" x2="593.4" y2="262" stroke="#666" stroke-width="0.4" />
<line x1="596.4" y1="262" x2="604.4" y2="262" stroke="#666" stroke-width="0.4" />
<line x1="585.2" y1="264.6" x2="593.4" y2="264.6" stroke="#666" stroke-width="0.4" />
<line x1="596.4" y1="264.6" x2="604.4" y2="264.6" stroke="#666" stroke-width="0.4" />
<line x1="585.2" y1="267.2" x2="593.4" y2="267.2" stroke="#666" stroke-width="0.4" />
<line x1="596.4" y1="267.2" x2="604.4" y2="267.2" stroke="#666" stroke-width="0.4" />
<line x1="585.2" y1="269.8" x2="593.4" y2="269.8" stroke="#666" stroke-width="0.4" />
<line x1="596.4" y1="269.8" x2="604.4" y2="269.8" stroke="#666" stroke-width="0.4" />
<line x1="585.2" y1="272.4" x2="593.4" y2="272.4" stroke="#666" stroke-width="0.4" />
<line x1="596.4" y1="272.4" x2="604.4" y2="272.4" stroke="#666" stroke-width="0.4" />
<line x1="585.2" y1="275" x2="593.4" y2="275" stroke="#666" stroke-width="0.4" />
<line x1="596.4" y1="275" x2="604.4" y2="275" stroke="#666" stroke-width="0.4" />
<line x1="585.2" y1="277.6" x2="593.4" y2="277.6" stroke="#666" stroke-width="0.4" />
<line x1="596.4" y1="277.6" x2="604.4" y2="277.6" stroke="#666" stroke-width="0.4" />
<line x1="593.4" y1="258.6" x2="593.4" y2="278.6" stroke="#666" stroke-width="0.45" />
<line x1="596.4" y1="258.6" x2="596.4" y2="278.6" stroke="#666" stroke-width="0.45" />
<line x1="585.2" y1="278.6" x2="604.4" y2="278.6" stroke="#666" stroke-width="0.4" />
<path d="M539.6 265.6V281H532M545.6 265.6V276M565.4 265.6V283.6H582.4M545.6 279H563" fill="none" stroke="#4e4e4e" stroke-width="0.6" />
<ellipse cx="529.6" cy="270.8" rx="1.5" ry="2.1" fill="none" stroke="#777" stroke-width="0.45"/>
<ellipse cx="543.4" cy="270.8" rx="1.5" ry="2.1" fill="none" stroke="#777" stroke-width="0.45"/>
<rect x="538.4" y="293.4" width="27.6" height="5.4" rx="0" fill="none" stroke="#777" stroke-width="0.5" />
<rect x="542.6" y="295" width="5" height="3" rx="0" fill="none" stroke="#777" stroke-width="0.4" />
<rect x="555.6" y="295" width="5" height="3" rx="0" fill="none" stroke="#777" stroke-width="0.4" />
<rect x="576.6" y="267.4" width="5" height="4.6" rx="0" fill="none" stroke="#888" stroke-width="0.4" />
<path d="M567.4 268.4L572.8 276" fill="none" stroke="#777" stroke-width="0.4" />
<circle cx="576.6" cy="213.6" r="2.2" fill="#fff" stroke="#8a8a8a" stroke-width="0.4"/>
<circle cx="588.8" cy="213.6" r="2.2" fill="#fff" stroke="#8a8a8a" stroke-width="0.4"/>
<circle cx="576.6" cy="300.6" r="2.2" fill="#fff" stroke="#8a8a8a" stroke-width="0.4"/>
<circle cx="588.8" cy="300.6" r="2.2" fill="#fff" stroke="#8a8a8a" stroke-width="0.4"/>
<circle cx="535" cy="289.4" r="2.2" fill="#fff" stroke="#8a8a8a" stroke-width="0.4"/>
<circle cx="577.4" cy="283.6" r="2.2" fill="#fff" stroke="#8a8a8a" stroke-width="0.4"/>
<path d="M574.4 215A5 5 0 0 0 579.4 220M591 215A5 5 0 0 1 586 220" fill="none" stroke="#8a8a8a" stroke-width="0.4" />
<path d="M574.4 298.8A5 5 0 0 1 579.4 293.8M591 298.8A5 5 0 0 0 586 293.8" fill="none" stroke="#8a8a8a" stroke-width="0.4" />
<line x1="472.4" y1="243.2" x2="477.4" y2="243.2" stroke="#e02a2a" stroke-width="0.5" />
<g><text x="476.86" y="243.45" font-family="Liberation Sans, sans-serif" font-size="2.2" font-weight="700" fill="#e03a20" textLength="22.08" lengthAdjust="spacingAndGlyphs">Split into three</text></g>
<g><text x="147.78" y="164.25" font-family="Liberation Sans, sans-serif" font-size="3.5" font-weight="700" fill="#1e1e1e" textLength="29.25" lengthAdjust="spacingAndGlyphs">OPEN OFFICE 208</text><line x1="147.78" y1="165.05" x2="177.03" y2="165.05" stroke="#1e1e1e" stroke-width="0.45"/></g>
<g><text x="217.88" y="144.05" font-family="Liberation Sans, sans-serif" font-size="3.5" font-weight="700" fill="#1e1e1e" textLength="21.45" lengthAdjust="spacingAndGlyphs">MEETING 201</text><line x1="217.88" y1="144.85" x2="239.32" y2="144.85" stroke="#1e1e1e" stroke-width="0.45"/></g>
<g><text x="246.08" y="144.05" font-family="Liberation Sans, sans-serif" font-size="3.5" font-weight="700" fill="#1e1e1e" textLength="21.45" lengthAdjust="spacingAndGlyphs">MEETING 202</text><line x1="246.08" y1="144.85" x2="267.53" y2="144.85" stroke="#1e1e1e" stroke-width="0.45"/></g>
<g><text x="217.88" y="176.65" font-family="Liberation Sans, sans-serif" font-size="3.5" font-weight="700" fill="#1e1e1e" textLength="21.45" lengthAdjust="spacingAndGlyphs">MEETING 203</text><line x1="217.88" y1="177.45" x2="239.32" y2="177.45" stroke="#1e1e1e" stroke-width="0.45"/></g>
<g><text x="246.08" y="176.65" font-family="Liberation Sans, sans-serif" font-size="3.5" font-weight="700" fill="#1e1e1e" textLength="21.45" lengthAdjust="spacingAndGlyphs">MEETING 204</text><line x1="246.08" y1="177.45" x2="267.53" y2="177.45" stroke="#1e1e1e" stroke-width="0.45"/></g>
<g><text x="313.65" y="145.45" font-family="Liberation Sans, sans-serif" font-size="3.5" font-weight="700" fill="#1e1e1e" textLength="19.5" lengthAdjust="spacingAndGlyphs">OFFICE 205</text><line x1="313.65" y1="146.25" x2="333.15" y2="146.25" stroke="#1e1e1e" stroke-width="0.45"/></g>
<g><text x="313.65" y="174.25" font-family="Liberation Sans, sans-serif" font-size="3.5" font-weight="700" fill="#1e1e1e" textLength="19.5" lengthAdjust="spacingAndGlyphs">OFFICE 206</text><line x1="313.65" y1="175.05" x2="333.15" y2="175.05" stroke="#1e1e1e" stroke-width="0.45"/></g>
<g><text x="385.15" y="157.25" font-family="Liberation Sans, sans-serif" font-size="3.5" font-weight="700" fill="#1e1e1e" textLength="27.3" lengthAdjust="spacingAndGlyphs">CONFERENCE 207</text><line x1="385.15" y1="158.05" x2="412.45" y2="158.05" stroke="#1e1e1e" stroke-width="0.45"/></g>
<g><text x="455.27" y="157.25" font-family="Liberation Sans, sans-serif" font-size="3.5" font-weight="700" fill="#1e1e1e" textLength="21.45" lengthAdjust="spacingAndGlyphs">MEETING 208</text><line x1="455.27" y1="158.05" x2="476.73" y2="158.05" stroke="#1e1e1e" stroke-width="0.45"/></g>
<g><text x="496.47" y="157.25" font-family="Liberation Sans, sans-serif" font-size="3.5" font-weight="700" fill="#1e1e1e" textLength="21.45" lengthAdjust="spacingAndGlyphs">MEETING 209</text><line x1="496.47" y1="158.05" x2="517.92" y2="158.05" stroke="#1e1e1e" stroke-width="0.45"/></g>
<g><text x="536.17" y="155.05" font-family="Liberation Sans, sans-serif" font-size="3.5" font-weight="700" fill="#1e1e1e" textLength="21.45" lengthAdjust="spacingAndGlyphs">MEETING 210</text><line x1="536.17" y1="155.85" x2="557.62" y2="155.85" stroke="#1e1e1e" stroke-width="0.45"/></g>
<g><text x="580.95" y="155.55" font-family="Liberation Sans, sans-serif" font-size="3.5" font-weight="700" fill="#1e1e1e" textLength="27.3" lengthAdjust="spacingAndGlyphs">CONFERENCE 211</text><line x1="580.95" y1="156.35" x2="608.25" y2="156.35" stroke="#1e1e1e" stroke-width="0.45"/></g>
<g><text x="639.15" y="146.25" font-family="Liberation Sans, sans-serif" font-size="3.5" font-weight="700" fill="#1e1e1e" textLength="19.5" lengthAdjust="spacingAndGlyphs">OFFICE 212</text><line x1="639.15" y1="147.05" x2="658.65" y2="147.05" stroke="#1e1e1e" stroke-width="0.45"/></g>
<g><text x="639.15" y="174.65" font-family="Liberation Sans, sans-serif" font-size="3.5" font-weight="700" fill="#1e1e1e" textLength="19.5" lengthAdjust="spacingAndGlyphs">OFFICE 213</text><line x1="639.15" y1="175.45" x2="658.65" y2="175.45" stroke="#1e1e1e" stroke-width="0.45"/></g>
<g><text x="705.27" y="145.55" font-family="Liberation Sans, sans-serif" font-size="3.5" font-weight="700" fill="#1e1e1e" textLength="21.45" lengthAdjust="spacingAndGlyphs">MEETING 214</text><line x1="705.27" y1="146.35" x2="726.73" y2="146.35" stroke="#1e1e1e" stroke-width="0.45"/></g>
<g><text x="733.17" y="145.55" font-family="Liberation Sans, sans-serif" font-size="3.5" font-weight="700" fill="#1e1e1e" textLength="21.45" lengthAdjust="spacingAndGlyphs">MEETING 216</text><line x1="733.17" y1="146.35" x2="754.62" y2="146.35" stroke="#1e1e1e" stroke-width="0.45"/></g>
<g><text x="705.27" y="182.35" font-family="Liberation Sans, sans-serif" font-size="3.5" font-weight="700" fill="#1e1e1e" textLength="21.45" lengthAdjust="spacingAndGlyphs">MEETING 215</text><line x1="705.27" y1="183.15" x2="726.73" y2="183.15" stroke="#1e1e1e" stroke-width="0.45"/></g>
<g><text x="733.17" y="182.35" font-family="Liberation Sans, sans-serif" font-size="3.5" font-weight="700" fill="#1e1e1e" textLength="21.45" lengthAdjust="spacingAndGlyphs">MEETING 217</text><line x1="733.17" y1="183.15" x2="754.62" y2="183.15" stroke="#1e1e1e" stroke-width="0.45"/></g>
<g><text x="791.08" y="169.95" font-family="Liberation Sans, sans-serif" font-size="3.5" font-weight="700" fill="#1e1e1e" textLength="29.25" lengthAdjust="spacingAndGlyphs">OPEN OFFICE 218</text><line x1="791.08" y1="170.75" x2="820.33" y2="170.75" stroke="#1e1e1e" stroke-width="0.45"/></g>
<g><text x="475.22" y="198.15" font-family="Liberation Sans, sans-serif" font-size="3.5" font-weight="700" fill="#1e1e1e" textLength="25.35" lengthAdjust="spacingAndGlyphs">RECEPTION 200</text><line x1="475.22" y1="198.95" x2="500.57" y2="198.95" stroke="#1e1e1e" stroke-width="0.45"/></g>
<g><text x="129.08" y="217.75" font-family="Liberation Sans, sans-serif" font-size="3.5" font-weight="700" fill="#1e1e1e" textLength="21.45" lengthAdjust="spacingAndGlyphs">MEETING 247</text><line x1="129.08" y1="218.55" x2="150.53" y2="218.55" stroke="#1e1e1e" stroke-width="0.45"/></g>
<g><text x="127.35" y="260.55" font-family="Liberation Sans, sans-serif" font-size="3.5" font-weight="700" fill="#1e1e1e" textLength="27.3" lengthAdjust="spacingAndGlyphs">CONFERENCE 246</text><line x1="127.35" y1="261.35" x2="154.65" y2="261.35" stroke="#1e1e1e" stroke-width="0.45"/></g>
<g><text x="130.28" y="301.55" font-family="Liberation Sans, sans-serif" font-size="3.5" font-weight="700" fill="#1e1e1e" textLength="21.45" lengthAdjust="spacingAndGlyphs">MEETING 245</text><line x1="130.28" y1="302.35" x2="151.72" y2="302.35" stroke="#1e1e1e" stroke-width="0.45"/></g>
<g><text x="245.38" y="260.55" font-family="Liberation Sans, sans-serif" font-size="3.5" font-weight="700" fill="#1e1e1e" textLength="29.25" lengthAdjust="spacingAndGlyphs">OPEN OFFICE 248</text><line x1="245.38" y1="261.35" x2="274.62" y2="261.35" stroke="#1e1e1e" stroke-width="0.45"/></g>
<g><text x="332.47" y="241.05" font-family="Liberation Sans, sans-serif" font-size="3.5" font-weight="700" fill="#1e1e1e" textLength="21.45" lengthAdjust="spacingAndGlyphs">OPEN RM 249</text><line x1="332.47" y1="241.85" x2="353.93" y2="241.85" stroke="#1e1e1e" stroke-width="0.45"/></g>
<g><text x="332.47" y="277.25" font-family="Liberation Sans, sans-serif" font-size="3.5" font-weight="700" fill="#1e1e1e" textLength="21.45" lengthAdjust="spacingAndGlyphs">COPY RM 250</text><line x1="332.47" y1="278.05" x2="353.93" y2="278.05" stroke="#1e1e1e" stroke-width="0.45"/></g>
<g><text x="370.12" y="228.25" font-family="Liberation Sans, sans-serif" font-size="3.5" font-weight="700" fill="#1e1e1e" textLength="17.55" lengthAdjust="spacingAndGlyphs">STAIR 201</text><line x1="370.12" y1="229.05" x2="387.67" y2="229.05" stroke="#1e1e1e" stroke-width="0.45"/></g>
<g><text x="391.75" y="228.25" font-family="Liberation Sans, sans-serif" font-size="3.5" font-weight="700" fill="#1e1e1e" textLength="27.3" lengthAdjust="spacingAndGlyphs">ELECTRICAL 202</text><line x1="391.75" y1="229.05" x2="419.05" y2="229.05" stroke="#1e1e1e" stroke-width="0.45"/></g>
<g><text x="402" y="249.55" font-family="Liberation Sans, sans-serif" font-size="3.5" font-weight="700" fill="#1e1e1e" textLength="23.4" lengthAdjust="spacingAndGlyphs">STORAGE 203A</text><line x1="402" y1="250.35" x2="425.4" y2="250.35" stroke="#1e1e1e" stroke-width="0.45"/></g>
<g><text x="396" y="260.55" font-family="Liberation Sans, sans-serif" font-size="3.5" font-weight="700" fill="#1e1e1e" textLength="23.4" lengthAdjust="spacingAndGlyphs">STORAGE 204A</text><line x1="396" y1="261.35" x2="419.4" y2="261.35" stroke="#1e1e1e" stroke-width="0.45"/></g>
<g><text x="406.35" y="289.35" font-family="Liberation Sans, sans-serif" font-size="3.5" font-weight="700" fill="#1e1e1e" textLength="27.3" lengthAdjust="spacingAndGlyphs">WOMEN'S RR 204</text><line x1="406.35" y1="290.15" x2="433.65" y2="290.15" stroke="#1e1e1e" stroke-width="0.45"/></g>
<g><text x="478.53" y="255.55" font-family="Liberation Sans, sans-serif" font-size="3.5" font-weight="700" fill="#1e1e1e" textLength="17.55" lengthAdjust="spacingAndGlyphs">LOBBY 216</text><line x1="478.53" y1="256.35" x2="496.07" y2="256.35" stroke="#1e1e1e" stroke-width="0.45"/></g>
<g><text x="543.55" y="219.75" font-family="Liberation Sans, sans-serif" font-size="3.5" font-weight="700" fill="#1e1e1e" textLength="19.5" lengthAdjust="spacingAndGlyphs">SERVER 237</text><line x1="543.55" y1="220.55" x2="563.05" y2="220.55" stroke="#1e1e1e" stroke-width="0.45"/></g>
<g><text x="553.9" y="262.55" font-family="Liberation Sans, sans-serif" font-size="3.5" font-weight="700" fill="#1e1e1e" textLength="23.4" lengthAdjust="spacingAndGlyphs">STORAGE 206A</text><line x1="553.9" y1="263.35" x2="577.3" y2="263.35" stroke="#1e1e1e" stroke-width="0.45"/></g>
<g><text x="543.6" y="290.35" font-family="Liberation Sans, sans-serif" font-size="3.5" font-weight="700" fill="#1e1e1e" textLength="23.4" lengthAdjust="spacingAndGlyphs">MEN'S RR 208</text><line x1="543.6" y1="291.15" x2="567" y2="291.15" stroke="#1e1e1e" stroke-width="0.45"/></g>
<g><text x="584.73" y="290.35" font-family="Liberation Sans, sans-serif" font-size="3.5" font-weight="700" fill="#1e1e1e" textLength="17.55" lengthAdjust="spacingAndGlyphs">STAIR 235</text><line x1="584.73" y1="291.15" x2="602.27" y2="291.15" stroke="#1e1e1e" stroke-width="0.45"/></g>
<g><text x="616.15" y="240.05" font-family="Liberation Sans, sans-serif" font-size="3.5" font-weight="700" fill="#1e1e1e" textLength="19.5" lengthAdjust="spacingAndGlyphs">OFFICE 201</text><line x1="616.15" y1="240.85" x2="635.65" y2="240.85" stroke="#1e1e1e" stroke-width="0.45"/></g>
<g><text x="616.9" y="276.45" font-family="Liberation Sans, sans-serif" font-size="3.5" font-weight="700" fill="#1e1e1e" textLength="15.6" lengthAdjust="spacingAndGlyphs">COPY 202</text><line x1="616.9" y1="277.25" x2="632.5" y2="277.25" stroke="#1e1e1e" stroke-width="0.45"/></g>
<g><text x="702.08" y="255.05" font-family="Liberation Sans, sans-serif" font-size="3.5" font-weight="700" fill="#1e1e1e" textLength="29.25" lengthAdjust="spacingAndGlyphs">OPEN OFFICE 203</text><line x1="702.08" y1="255.85" x2="731.33" y2="255.85" stroke="#1e1e1e" stroke-width="0.45"/></g>
<g><text x="820.38" y="217.75" font-family="Liberation Sans, sans-serif" font-size="3.5" font-weight="700" fill="#1e1e1e" textLength="21.45" lengthAdjust="spacingAndGlyphs">MEETING 204</text><line x1="820.38" y1="218.55" x2="841.83" y2="218.55" stroke="#1e1e1e" stroke-width="0.45"/></g>
<g><text x="818.15" y="260.55" font-family="Liberation Sans, sans-serif" font-size="3.5" font-weight="700" fill="#1e1e1e" textLength="27.3" lengthAdjust="spacingAndGlyphs">CONFERENCE 205</text><line x1="818.15" y1="261.35" x2="845.45" y2="261.35" stroke="#1e1e1e" stroke-width="0.45"/></g>
<g><text x="820.38" y="300.35" font-family="Liberation Sans, sans-serif" font-size="3.5" font-weight="700" fill="#1e1e1e" textLength="21.45" lengthAdjust="spacingAndGlyphs">MEETING 206</text><line x1="820.38" y1="301.15" x2="841.83" y2="301.15" stroke="#1e1e1e" stroke-width="0.45"/></g>
<g><text x="149.38" y="350.15" font-family="Liberation Sans, sans-serif" font-size="3.5" font-weight="700" fill="#1e1e1e" textLength="29.25" lengthAdjust="spacingAndGlyphs">OPEN OFFICE 244</text><line x1="149.38" y1="350.95" x2="178.62" y2="350.95" stroke="#1e1e1e" stroke-width="0.45"/></g>
<g><text x="232.05" y="338.65" font-family="Liberation Sans, sans-serif" font-size="3.5" font-weight="700" fill="#1e1e1e" textLength="19.5" lengthAdjust="spacingAndGlyphs">OFFICE 242</text><line x1="232.05" y1="339.45" x2="251.55" y2="339.45" stroke="#1e1e1e" stroke-width="0.45"/></g>
<g><text x="232.05" y="369.25" font-family="Liberation Sans, sans-serif" font-size="3.5" font-weight="700" fill="#1e1e1e" textLength="19.5" lengthAdjust="spacingAndGlyphs">OFFICE 243</text><line x1="232.05" y1="370.05" x2="251.55" y2="370.05" stroke="#1e1e1e" stroke-width="0.45"/></g>
<g><text x="299.95" y="342.65" font-family="Liberation Sans, sans-serif" font-size="3.5" font-weight="700" fill="#1e1e1e" textLength="19.5" lengthAdjust="spacingAndGlyphs">OFFICE 240</text><line x1="299.95" y1="343.45" x2="319.45" y2="343.45" stroke="#1e1e1e" stroke-width="0.45"/></g>
<g><text x="328.25" y="342.65" font-family="Liberation Sans, sans-serif" font-size="3.5" font-weight="700" fill="#1e1e1e" textLength="19.5" lengthAdjust="spacingAndGlyphs">OFFICE 239</text><line x1="328.25" y1="343.45" x2="347.75" y2="343.45" stroke="#1e1e1e" stroke-width="0.45"/></g>
<g><text x="299.95" y="372.25" font-family="Liberation Sans, sans-serif" font-size="3.5" font-weight="700" fill="#1e1e1e" textLength="19.5" lengthAdjust="spacingAndGlyphs">OFFICE 241</text><line x1="299.95" y1="373.05" x2="319.45" y2="373.05" stroke="#1e1e1e" stroke-width="0.45"/></g>
<g><text x="328.25" y="372.25" font-family="Liberation Sans, sans-serif" font-size="3.5" font-weight="700" fill="#1e1e1e" textLength="19.5" lengthAdjust="spacingAndGlyphs">OFFICE 238</text><line x1="328.25" y1="373.05" x2="347.75" y2="373.05" stroke="#1e1e1e" stroke-width="0.45"/></g>
<g><text x="407.57" y="347.35" font-family="Liberation Sans, sans-serif" font-size="3.5" font-weight="700" fill="#1e1e1e" textLength="21.45" lengthAdjust="spacingAndGlyphs">MEETING 234</text><line x1="407.57" y1="348.15" x2="429.03" y2="348.15" stroke="#1e1e1e" stroke-width="0.45"/></g>
<g><text x="476.23" y="362.55" font-family="Liberation Sans, sans-serif" font-size="3.5" font-weight="700" fill="#1e1e1e" textLength="17.55" lengthAdjust="spacingAndGlyphs">BREAK 223</text><line x1="476.23" y1="363.35" x2="493.77" y2="363.35" stroke="#1e1e1e" stroke-width="0.45"/></g>
<g><text x="544.88" y="347.35" font-family="Liberation Sans, sans-serif" font-size="3.5" font-weight="700" fill="#1e1e1e" textLength="21.45" lengthAdjust="spacingAndGlyphs">MEETING 231</text><line x1="544.88" y1="348.15" x2="566.33" y2="348.15" stroke="#1e1e1e" stroke-width="0.45"/></g>
<g><text x="569.95" y="347.35" font-family="Liberation Sans, sans-serif" font-size="3.5" font-weight="700" fill="#1e1e1e" textLength="19.5" lengthAdjust="spacingAndGlyphs">OFFICE 230</text><line x1="569.95" y1="348.15" x2="589.45" y2="348.15" stroke="#1e1e1e" stroke-width="0.45"/></g>
<g><text x="544.88" y="371.75" font-family="Liberation Sans, sans-serif" font-size="3.5" font-weight="700" fill="#1e1e1e" textLength="21.45" lengthAdjust="spacingAndGlyphs">MEETING 232</text><line x1="544.88" y1="372.55" x2="566.33" y2="372.55" stroke="#1e1e1e" stroke-width="0.45"/></g>
<g><text x="571.15" y="371.75" font-family="Liberation Sans, sans-serif" font-size="3.5" font-weight="700" fill="#1e1e1e" textLength="19.5" lengthAdjust="spacingAndGlyphs">OFFICE 229</text><line x1="571.15" y1="372.55" x2="590.65" y2="372.55" stroke="#1e1e1e" stroke-width="0.45"/></g>
<g><text x="625.45" y="338.15" font-family="Liberation Sans, sans-serif" font-size="3.5" font-weight="700" fill="#1e1e1e" textLength="19.5" lengthAdjust="spacingAndGlyphs">OFFICE 227</text><line x1="625.45" y1="338.95" x2="644.95" y2="338.95" stroke="#1e1e1e" stroke-width="0.45"/></g>
<g><text x="652.75" y="338.15" font-family="Liberation Sans, sans-serif" font-size="3.5" font-weight="700" fill="#1e1e1e" textLength="19.5" lengthAdjust="spacingAndGlyphs">OFFICE 228</text><line x1="652.75" y1="338.95" x2="672.25" y2="338.95" stroke="#1e1e1e" stroke-width="0.45"/></g>
<g><text x="625.45" y="372.95" font-family="Liberation Sans, sans-serif" font-size="3.5" font-weight="700" fill="#1e1e1e" textLength="19.5" lengthAdjust="spacingAndGlyphs">OFFICE 226</text><line x1="625.45" y1="373.75" x2="644.95" y2="373.75" stroke="#1e1e1e" stroke-width="0.45"/></g>
<g><text x="652.05" y="372.95" font-family="Liberation Sans, sans-serif" font-size="3.5" font-weight="700" fill="#1e1e1e" textLength="19.5" lengthAdjust="spacingAndGlyphs">OFFICE 225</text><line x1="652.05" y1="373.75" x2="671.55" y2="373.75" stroke="#1e1e1e" stroke-width="0.45"/></g>
<g><text x="723.65" y="339.45" font-family="Liberation Sans, sans-serif" font-size="3.5" font-weight="700" fill="#1e1e1e" textLength="19.5" lengthAdjust="spacingAndGlyphs">OFFICE 233</text><line x1="723.65" y1="340.25" x2="743.15" y2="340.25" stroke="#1e1e1e" stroke-width="0.45"/></g>
<g><text x="723.65" y="370.55" font-family="Liberation Sans, sans-serif" font-size="3.5" font-weight="700" fill="#1e1e1e" textLength="19.5" lengthAdjust="spacingAndGlyphs">OFFICE 224</text><line x1="723.65" y1="371.35" x2="743.15" y2="371.35" stroke="#1e1e1e" stroke-width="0.45"/></g>
<g><text x="796.58" y="347.55" font-family="Liberation Sans, sans-serif" font-size="3.5" font-weight="700" fill="#1e1e1e" textLength="29.25" lengthAdjust="spacingAndGlyphs">OPEN OFFICE 222</text><line x1="796.58" y1="348.35" x2="825.83" y2="348.35" stroke="#1e1e1e" stroke-width="0.45"/></g>
<g><rect x="380.55" y="343.7" width="20.7" height="4.6" fill="#f4f01a"/><text x="381.15" y="347.35" font-family="Liberation Sans, sans-serif" font-size="3.5" font-weight="700" fill="#1e1e1e" textLength="19.5" lengthAdjust="spacingAndGlyphs">OFFICE 236</text><line x1="381.15" y1="348.15" x2="400.65" y2="348.15" stroke="#1e1e1e" stroke-width="0.45"/></g>
<g><rect x="380.55" y="371.1" width="20.7" height="4.6" fill="#f4f01a"/><text x="381.15" y="374.75" font-family="Liberation Sans, sans-serif" font-size="3.5" font-weight="700" fill="#1e1e1e" textLength="19.5" lengthAdjust="spacingAndGlyphs">OFFICE 237</text><line x1="381.15" y1="375.55" x2="400.65" y2="375.55" stroke="#1e1e1e" stroke-width="0.45"/></g>
<g><rect x="406.97" y="371.1" width="22.65" height="4.6" fill="#f4f01a"/><text x="407.57" y="374.75" font-family="Liberation Sans, sans-serif" font-size="3.5" font-weight="700" fill="#1e1e1e" textLength="21.45" lengthAdjust="spacingAndGlyphs">MEETING 233</text><line x1="407.57" y1="375.55" x2="429.03" y2="375.55" stroke="#1e1e1e" stroke-width="0.45"/></g>
<g transform="rotate(-90 378.5 283)"><text x="366.8" y="283.85" font-family="Liberation Sans, sans-serif" font-size="3.5" font-weight="700" fill="#1e1e1e" textLength="23.4" lengthAdjust="spacingAndGlyphs">MEN'S RR 203</text><line x1="366.8" y1="284.65" x2="390.2" y2="284.65" stroke="#1e1e1e" stroke-width="0.45"/></g>
<g transform="rotate(-90 594.5 234.3)"><text x="583.77" y="235.15" font-family="Liberation Sans, sans-serif" font-size="3.5" font-weight="700" fill="#1e1e1e" textLength="21.45" lengthAdjust="spacingAndGlyphs">STORAGE 236</text><line x1="583.77" y1="235.95" x2="605.23" y2="235.95" stroke="#1e1e1e" stroke-width="0.45"/></g>
<g><text x="315.9" y="152.05" font-family="Liberation Sans, sans-serif" font-size="2.6" font-weight="700" fill="#e04a30" textLength="15" lengthAdjust="spacingAndGlyphs">334.816 sf</text></g>
<g><text x="315.9" y="180.45" font-family="Liberation Sans, sans-serif" font-size="2.6" font-weight="700" fill="#c06a30" textLength="15" lengthAdjust="spacingAndGlyphs">193.876 sf</text></g>
<g><text x="390.55" y="163.05" font-family="Liberation Sans, sans-serif" font-size="2.6" font-weight="400" fill="#5a3a2a" textLength="16.5" lengthAdjust="spacingAndGlyphs">33.512 sq m</text></g>
<g><text x="368.8" y="157.65" font-family="Liberation Sans, sans-serif" font-size="2.2" font-weight="400" fill="#6a4a3a" textLength="6" lengthAdjust="spacingAndGlyphs">25 SF</text></g>
<g><text x="641.4" y="139.25" font-family="Liberation Sans, sans-serif" font-size="2.6" font-weight="700" fill="#e04a30" textLength="15" lengthAdjust="spacingAndGlyphs">334.317 sf</text></g>
<g><text x="708.75" y="135.05" font-family="Liberation Sans, sans-serif" font-size="2.8" font-weight="700" fill="#c030c0" textLength="14.5" lengthAdjust="spacingAndGlyphs">195.254 sf</text></g>
<g><text x="734.15" y="135.05" font-family="Liberation Sans, sans-serif" font-size="2.8" font-weight="700" fill="#c030c0" textLength="19.5" lengthAdjust="spacingAndGlyphs">2,286.257 sq in</text></g>
<g><text x="736.65" y="174.85" font-family="Liberation Sans, sans-serif" font-size="2.8" font-weight="700" fill="#c030c0" textLength="14.5" lengthAdjust="spacingAndGlyphs">175.895 sf</text></g>
<text x="287.8" y="261" font-family="Liberation Sans, sans-serif" font-weight="700" font-size="4.6" fill="#e0282c" textLength="28.6" lengthAdjust="spacingAndGlyphs">160.886 sq m</text>
<line x1="72.6" y1="523.5" x2="917.4" y2="523.5" stroke="#8c8c8c" stroke-width="0.6" />
<line x1="72.6" y1="580.5" x2="917.4" y2="580.5" stroke="#8c8c8c" stroke-width="0.6" />
<line x1="288.4" y1="523.5" x2="288.4" y2="580.5" stroke="#8c8c8c" stroke-width="0.6" />
<line x1="358.4" y1="523.5" x2="358.4" y2="580.5" stroke="#8c8c8c" stroke-width="0.6" />
<line x1="428.3" y1="523.5" x2="428.3" y2="580.5" stroke="#8c8c8c" stroke-width="0.6" />
<line x1="498.3" y1="523.5" x2="498.3" y2="580.5" stroke="#8c8c8c" stroke-width="0.6" />
<line x1="568.3" y1="523.5" x2="568.3" y2="580.5" stroke="#8c8c8c" stroke-width="0.6" />
<line x1="637.6" y1="523.5" x2="637.6" y2="580.5" stroke="#8c8c8c" stroke-width="0.6" />
<line x1="707.6" y1="523.5" x2="707.6" y2="580.5" stroke="#8c8c8c" stroke-width="0.6" />
<line x1="777.4" y1="523.5" x2="777.4" y2="580.5" stroke="#8c8c8c" stroke-width="0.6" />
<line x1="847.3" y1="523.5" x2="847.3" y2="580.5" stroke="#8c8c8c" stroke-width="0.6" />
<line x1="847.3" y1="573.4" x2="917.4" y2="573.4" stroke="#8c8c8c" stroke-width="0.6" />
<rect x="76.1" y="526.9" width="92.4" height="49.8" rx="0" fill="none" stroke="#e2e2e2" stroke-width="0.9" />
<rect x="77.6" y="528.4" width="89.4" height="46.8" rx="0" fill="none" stroke="#efefef" stroke-width="0.5" />
<text transform="translate(88.4,547.7) scale(0.6,1)" font-family="Liberation Sans, sans-serif" font-size="10.8" font-weight="700" fill="#a9a9a9" textLength="113.83" lengthAdjust="spacing">BRIGHTER</text>
<text transform="translate(88.4,558) scale(0.6,1)" font-family="Liberation Sans, sans-serif" font-size="10.8" font-weight="700" fill="#a9a9a9" textLength="113.83" lengthAdjust="spacing">GRAPHICS</text>
<text x="94" y="564.8" font-family="Liberation Sans, sans-serif" font-size="2.2" font-weight="400" fill="#e0e0e0" textLength="56" lengthAdjust="spacingAndGlyphs">THE CONSTRUCTION TECHNOLOGY</text>
<path d="M173.3 538.8H177.4V556.8H195.2V560.7H173.3Z" fill="#b4b4b4" stroke="none" stroke-width="0" />
<path d="M179.6 538.8H195.2V554.6H179.6Z M183.2 542.4V551H191.6V542.4Z" fill="#b4b4b4" stroke="none" stroke-width="0" fill-rule="evenodd"/>
<rect x="185.3" y="544.5" width="4.3" height="4.4" rx="0" fill="#b4b4b4" stroke="none" stroke-width="0" />
<text x="200.9" y="557" font-family="Liberation Sans, sans-serif" font-size="18.4" font-weight="700" fill="#b2b2b2" textLength="81" lengthAdjust="spacingAndGlyphs">BLUEBEAM</text>
<text x="200.9" y="565.3" font-family="Liberation Sans, sans-serif" font-size="5.2" font-weight="400" fill="#444" textLength="43.2" lengthAdjust="spacingAndGlyphs">Platinum Partner</text>
<text x="294.9" y="530.7" font-family="Liberation Sans, sans-serif" font-size="5.6" font-weight="700" fill="#1a1a1a" textLength="49.9" lengthAdjust="spacingAndGlyphs">Capture Engineers</text>
<text x="294.9" y="537" font-family="Liberation Sans, sans-serif" font-size="5.6" font-weight="400" fill="#1a1a1a" textLength="28.4" lengthAdjust="spacingAndGlyphs">Mechanical</text>
<text x="294.9" y="543.3" font-family="Liberation Sans, sans-serif" font-size="5.6" font-weight="400" fill="#1a1a1a" textLength="23.2" lengthAdjust="spacingAndGlyphs">Electrical</text>
<text x="294.9" y="549.5" font-family="Liberation Sans, sans-serif" font-size="5.6" font-weight="400" fill="#1a1a1a" textLength="23.6" lengthAdjust="spacingAndGlyphs">Plumbing</text>
<text x="294.9" y="562.2" font-family="Liberation Sans, sans-serif" font-size="5.6" font-weight="400" fill="#1a1a1a" textLength="35.2" lengthAdjust="spacingAndGlyphs">1234 Miller St.</text>
<text x="294.9" y="568.5" font-family="Liberation Sans, sans-serif" font-size="5.6" font-weight="400" fill="#1a1a1a" textLength="58" lengthAdjust="spacingAndGlyphs">Manchester, NH 06930</text>
<text x="366.7" y="530.7" font-family="Liberation Sans, sans-serif" font-size="5.6" font-weight="700" fill="#1a1a1a" textLength="53.3" lengthAdjust="spacingAndGlyphs">REVU ARCHITECTS</text>
<text x="366.7" y="543.3" font-family="Liberation Sans, sans-serif" font-size="5.6" font-weight="400" fill="#1a1a1a" textLength="43.3" lengthAdjust="spacingAndGlyphs">5555 N. Broad St</text>
<text x="366.7" y="549.6" font-family="Liberation Sans, sans-serif" font-size="5.6" font-weight="400" fill="#1a1a1a" textLength="51.4" lengthAdjust="spacingAndGlyphs">Pasadena CA 91101</text>
<text x="433.9" y="530.7" font-family="Liberation Sans, sans-serif" font-size="5.6" font-weight="700" fill="#1a1a1a" textLength="49.9" lengthAdjust="spacingAndGlyphs">OFFICE BUILDING</text>
<text x="433.9" y="543.3" font-family="Liberation Sans, sans-serif" font-size="5.6" font-weight="400" fill="#1a1a1a" textLength="48.6" lengthAdjust="spacingAndGlyphs">Project No: 323232</text>
<text x="433.9" y="555.8" font-family="Liberation Sans, sans-serif" font-size="5.6" font-weight="400" fill="#1a1a1a" textLength="41.4" lengthAdjust="spacingAndGlyphs">Project Address:</text>
<text x="433.9" y="562.2" font-family="Liberation Sans, sans-serif" font-size="5.6" font-weight="400" fill="#1a1a1a" textLength="43.6" lengthAdjust="spacingAndGlyphs">123 Schonsett St</text>
<text x="433.9" y="568.5" font-family="Liberation Sans, sans-serif" font-size="5.6" font-weight="400" fill="#1a1a1a" textLength="45.6" lengthAdjust="spacingAndGlyphs">Chicago, IL 60601</text>
<line x1="444" y1="563.3" x2="467.6" y2="563.3" stroke="#d05050" stroke-width="0.3" />
<text x="502.2" y="531" font-family="Liberation Sans, sans-serif" font-size="2.9" font-weight="700" fill="#333" textLength="27.8" lengthAdjust="spacingAndGlyphs">LEGAL DISCLAIMER</text>
<g>
<text x="502.2" y="537.6" font-family="Liberation Sans, sans-serif" font-size="2.9" font-weight="700" fill="#3a3a3a" textLength="63.18" lengthAdjust="spacingAndGlyphs">ALL IDEAS, DESIGNS, AND PLANS INDICATED</text>
<text x="502.2" y="540.95" font-family="Liberation Sans, sans-serif" font-size="2.9" font-weight="700" fill="#3a3a3a" textLength="51.84" lengthAdjust="spacingAndGlyphs">OR REPRESENTED BY THESE DRAWINGS</text>
<text x="502.2" y="544.3" font-family="Liberation Sans, sans-serif" font-size="2.9" font-weight="700" fill="#3a3a3a" textLength="53.46" lengthAdjust="spacingAndGlyphs">ARE OWNED AND ARE THE PROPERTY OF</text>
<text x="502.2" y="547.65" font-family="Liberation Sans, sans-serif" font-size="2.9" font-weight="700" fill="#3a3a3a" textLength="56.7" lengthAdjust="spacingAndGlyphs">BLUEBEAM, INC. AND WERE CREATED AND</text>
<text x="502.2" y="551" font-family="Liberation Sans, sans-serif" font-size="2.9" font-weight="700" fill="#3a3a3a" textLength="43.74" lengthAdjust="spacingAndGlyphs">DEVELOPED FOR DEMONSTRATION</text>
<text x="502.2" y="554.35" font-family="Liberation Sans, sans-serif" font-size="2.9" font-weight="700" fill="#3a3a3a" textLength="55.08" lengthAdjust="spacingAndGlyphs">PURPOSES ONLY. NONE OF SUCH IDEAS,</text>
<text x="502.2" y="557.7" font-family="Liberation Sans, sans-serif" font-size="2.9" font-weight="700" fill="#3a3a3a" textLength="56.7" lengthAdjust="spacingAndGlyphs">DESIGNS, OR PLANS SHALL BE USED FOR</text>
<text x="502.2" y="561.05" font-family="Liberation Sans, sans-serif" font-size="2.9" font-weight="700" fill="#3a3a3a" textLength="55.08" lengthAdjust="spacingAndGlyphs">ANY PURPOSE WHATSOEVER EXCEPT AS A</text>
<text x="502.2" y="564.4" font-family="Liberation Sans, sans-serif" font-size="2.9" font-weight="700" fill="#3a3a3a" textLength="46.98" lengthAdjust="spacingAndGlyphs">DEMONSTRATION NOT WITHOUT THE</text>
<text x="502.2" y="567.75" font-family="Liberation Sans, sans-serif" font-size="2.9" font-weight="700" fill="#3a3a3a" textLength="45.36" lengthAdjust="spacingAndGlyphs">EXPRESSED WRITTEN CONSENT OF</text>
<text x="502.2" y="571.1" font-family="Liberation Sans, sans-serif" font-size="2.9" font-weight="700" fill="#3a3a3a" textLength="22.68" lengthAdjust="spacingAndGlyphs">BLUEBEAM, INC.</text>
</g>
<text x="574.2" y="528.2" font-family="Liberation Sans, sans-serif" font-size="2.8" font-weight="400" fill="#444" textLength="7.4" lengthAdjust="spacingAndGlyphs">DATE</text>
<text x="630" y="528.2" font-family="Liberation Sans, sans-serif" font-size="2.8" font-weight="400" fill="#444" text-anchor="end">2/24/2018</text>
<text x="576" y="531.4" font-family="Liberation Sans, sans-serif" font-size="2.8" font-weight="400" fill="#444" textLength="14" lengthAdjust="spacingAndGlyphs">ISSUED FOR:</text>
<text x="630" y="531.4" font-family="Liberation Sans, sans-serif" font-size="2.8" font-weight="400" fill="#444" text-anchor="end">INTERNAL REVIEW</text>
<line x1="574" y1="532.4" x2="630.4" y2="532.4" stroke="#777" stroke-width="0.35" />
<text x="576.2" y="539.2" font-family="Liberation Sans, sans-serif" font-size="2.8" font-weight="400" fill="#444">PROJECT</text>
<text x="630" y="539.2" font-family="Liberation Sans, sans-serif" font-size="2.8" font-weight="400" fill="#444" text-anchor="end">Job#</text>
<line x1="575.6" y1="539.9" x2="630.3" y2="539.9" stroke="#777" stroke-width="0.35" />
<text x="576.2" y="542.7" font-family="Liberation Sans, sans-serif" font-size="2.8" font-weight="400" fill="#444">DRAWN BY</text>
<text x="630" y="542.7" font-family="Liberation Sans, sans-serif" font-size="2.8" font-weight="400" fill="#444" text-anchor="end">Author</text>
<line x1="575.6" y1="543.4" x2="630.3" y2="543.4" stroke="#777" stroke-width="0.35" />
<text x="576.2" y="546.2" font-family="Liberation Sans, sans-serif" font-size="2.8" font-weight="400" fill="#444">CHECKED BY</text>
<text x="630" y="546.2" font-family="Liberation Sans, sans-serif" font-size="2.8" font-weight="400" fill="#444" text-anchor="end">Checker</text>
<line x1="575.6" y1="546.9" x2="630.3" y2="546.9" stroke="#777" stroke-width="0.35" />
<text x="576.2" y="549.7" font-family="Liberation Sans, sans-serif" font-size="2.8" font-weight="400" fill="#444">APPROVED BY</text>
<text x="630" y="549.7" font-family="Liberation Sans, sans-serif" font-size="2.8" font-weight="400" fill="#444" text-anchor="end">Approver</text>
<line x1="575.6" y1="550.4" x2="630.3" y2="550.4" stroke="#777" stroke-width="0.35" />
<line x1="575.6" y1="536.4" x2="630.3" y2="536.4" stroke="#777" stroke-width="0.35" />
<rect x="575.6" y="551.3" width="54.7" height="3" rx="0" fill="none" stroke="#666" stroke-width="0.35" />
<line x1="588.6" y1="551.3" x2="588.6" y2="554.3" stroke="#666" stroke-width="0.35" />
<line x1="602.4" y1="551.3" x2="602.4" y2="554.3" stroke="#666" stroke-width="0.35" />
<text x="581.4" y="553.7" font-family="Liberation Sans, sans-serif" font-size="2.1" font-weight="400" fill="#444">#</text>
<text x="592.6" y="553.7" font-family="Liberation Sans, sans-serif" font-size="2.1" font-weight="400" fill="#444">DATE</text>
<text x="608.6" y="553.7" font-family="Liberation Sans, sans-serif" font-size="2.1" font-weight="400" fill="#444">DESCRIPTION</text>
<text x="655.9" y="547.6" font-family="Liberation Sans, sans-serif" font-size="7.7" font-weight="700" fill="#111" textLength="33.5" lengthAdjust="spacingAndGlyphs">NOT FOR</text>
<text x="642.8" y="556.3" font-family="Liberation Sans, sans-serif" font-size="7.7" font-weight="700" fill="#111" textLength="59.7" lengthAdjust="spacingAndGlyphs">CONSTRUCTION</text>
<text x="711.6" y="530.6" font-family="Liberation Sans, sans-serif" font-size="5.6" font-weight="400" fill="#333" textLength="20.8" lengthAdjust="spacingAndGlyphs">STAMP:</text>
<text x="781.4" y="530.6" font-family="Liberation Sans, sans-serif" font-size="5.6" font-weight="400" fill="#333" textLength="20.4" lengthAdjust="spacingAndGlyphs">STAMP:</text>
<text x="859.4" y="528.3" font-family="Liberation Sans, sans-serif" font-size="3.1" font-weight="400" fill="#333" textLength="44.8" lengthAdjust="spacingAndGlyphs">SHEET TITLE &amp; NUMBER</text>
<text x="858.3" y="537" font-family="Liberation Sans, sans-serif" font-size="5.9" font-weight="400" fill="#222" textLength="46.8" lengthAdjust="spacingAndGlyphs">LEVEL 02 FLOOR</text>
<text x="881.7" y="543.3" font-family="Liberation Sans, sans-serif" font-size="5.9" font-weight="400" fill="#222" text-anchor="middle">PLAN</text>
<text x="860.9" y="567.3" font-family="Liberation Sans, sans-serif" font-size="14.4" font-weight="700" fill="#111" textLength="42.7" lengthAdjust="spacingAndGlyphs">A2.2.1</text>
<text x="859.2" y="578.2" font-family="Liberation Sans, sans-serif" font-size="3.1" font-weight="400" fill="#333" textLength="49.8" lengthAdjust="spacingAndGlyphs">Copyright Bluebeam Software</text>
</g></g></svg>
<div class="abs" id="docl"></div><div class="abs" id="docr"></div>
<svg class="ov" id="icons" width="1005" height="636" viewBox="0 0 1005 636">
<clipPath id="mclip"><rect x="760" y="0" width="30" height="13.8"/></clipPath>
<g clip-path="url(#mclip)"><circle cx="775" cy="5.9" r="8" fill="#fff"/><path d="M772.4 -1C770.2 2.4 769 5.8 768.6 9.6" fill="none" stroke="#000" stroke-width="1.9"/><path d="M775.8 14.6C774.6 12.6 773 10.8 771.8 9.4C772.8 7.8 775.2 7.6 777.4 6.6C779.6 5.6 780.4 3.4 780.2 0.8" fill="none" stroke="#000" stroke-width="2"/></g>
<path d="M920.4 6.1H931.6" stroke="#f2f2f2" stroke-width="1.1" fill="none"/>
<path d="M952.6 4.2H960.6V12H952.6Z M955.2 4V1.8H963.2V9.6H960.8" stroke="#f2f2f2" stroke-width="1.1" fill="none"/>
<path d="M984 1.4L995 12.2M995 1.4L984 12.2" stroke="#f2f2f2" stroke-width="1.1" fill="none"/>
<rect x="5" y="17.9" width="30.8" height="17.6" rx="2.4" fill="#2f2f2f" stroke="#606060" stroke-width="1.3"/>
<g transform="translate(0,0)" fill="none" stroke="#e4e4e4" stroke-width="1.2" stroke-linecap="round" stroke-linejoin="round"><path d="M8.8 20.6H15.4L18.6 23.8V32.4H8.8Z"/><path d="M15 20.8V24.2H18.4" stroke-width="0.9"/><path d="M11.6 30.6V26.8H15.6V30.6H11.2M13.4 28.2V30.4" stroke-width="0.9"/></g>
<g transform="translate(0,0)" fill="none" stroke="#e4e4e4" stroke-width="1.2" stroke-linecap="round" stroke-linejoin="round"><path d="M25.6 25.2L28.7 27.9L31.8 25.2" stroke-width="1.3"/></g>
<rect x="229.4" y="17.8" width="17.8" height="17" rx="2.4" fill="#2f2f2f" stroke="#606060" stroke-width="1.3"/>
<g transform="translate(0,0)" fill="none" stroke="#e4e4e4" stroke-width="1.2" stroke-linecap="round" stroke-linejoin="round"><path d="M233.6 20.6H239.6L242.8 23.8V32.2H233.6Z"/><path d="M239.4 20.8V24H242.6" stroke-width="0.9"/></g>
<rect x="240.6" y="30.6" width="2.4" height="2.4" fill="#d8b23a"/>
<path d="M159.2 48.4L166.4 55.4M166.4 48.4L159.2 55.4" stroke="#eaeaea" stroke-width="1.1" fill="none"/>
<path d="M961.8 50.2L965.2 53.2L968.6 50.2" stroke="#e0e0e0" stroke-width="1.2" fill="none"/>
<g transform="translate(0,0)" fill="none" stroke="#e4e4e4" stroke-width="1.2" stroke-linecap="round" stroke-linejoin="round"><circle cx="9.7" cy="50.3" r="3.7"/><path d="M12.5 53.1L18.3 57.4"/></g>
<g transform="translate(0,0)" fill="none" stroke="#e4e4e4" stroke-width="1.2" stroke-linecap="round" stroke-linejoin="round"><rect x="5.3" y="72.3" width="13.4" height="6.4" rx="0.8"/><path d="M8 72.5v3.2M10.6 72.5v2.4M13.2 72.5v3.2M15.8 72.5v2.4"/></g>
<g transform="translate(0,0)" fill="none" stroke="#e4e4e4" stroke-width="1.2" stroke-linecap="round" stroke-linejoin="round"><path d="M6.2 99.7L9.4 95.9H18.4V103.6H9.4Z"/></g>
<g transform="translate(0,0)" fill="none" stroke="#e4e4e4" stroke-width="1.2" stroke-linecap="round" stroke-linejoin="round"><path d="M5.6 129.7H18.8" stroke-width="1.3"/><path d="M7.6 126.3L8.6 122.4L13.4 118.8L16.2 122L12 125.8Z"/><path d="M13.4 118.8L14.6 117.7M16.2 122L18.4 120.4M7.6 126.3L10.4 123.8"/></g>
<g transform="translate(0,0)" fill="none" stroke="#e4e4e4" stroke-width="1.2" stroke-linecap="round" stroke-linejoin="round"><rect x="6.4" y="142.6" width="5" height="5"/><rect x="13.4" y="142.6" width="5" height="5"/><rect x="6.4" y="149.2" width="5" height="5"/><rect x="13.4" y="149.2" width="5" height="5"/></g>
<g transform="translate(0,0)" fill="none" stroke="#e4e4e4" stroke-width="1.2" stroke-linecap="round" stroke-linejoin="round"><rect x="7.4" y="167" width="9.4" height="11" rx="0.6"/><path d="M7.4 172.5H16.8M10.6 169.7H13.6M10.6 175.2H13.6"/></g>
<g transform="translate(0,0)" fill="none" stroke="#e4e4e4" stroke-width="1.2" stroke-linecap="round" stroke-linejoin="round"><rect x="7.4" y="190.6" width="9.4" height="11.8" rx="0.6"/><path d="M9.6 190.8V197.6H12.6V190.8"/></g>
<g transform="translate(0,0)" fill="none" stroke="#e4e4e4" stroke-width="1.2" stroke-linecap="round" stroke-linejoin="round"><path d="M10.4 214.8H6.6V226.6H12.6V222.6H10.2M12.6 214.8H18.6V226.6H15.4M9.4 219H13.2V217.2M15.6 218.4V222.4"/></g>
<g transform="translate(0,0)" fill="none" stroke="#e4e4e4" stroke-width="1.2" stroke-linecap="round" stroke-linejoin="round"><path d="M16.6 246.5V250.8H6.6V238.8H16.6V240.5"/><path d="M8.6 241.6H14.6M8.6 244.6H12.4M8.6 247.6H10.8"/><path d="M12.4 248.6L13 246.2L17.4 241.8L19 243.4L14.6 247.9Z" stroke-width="1"/></g>
<g transform="translate(0,0)" fill="none" stroke="#e4e4e4" stroke-width="1.2" stroke-linecap="round" stroke-linejoin="round"><path d="M12.2 263.6L18.6 267.2L12.2 270.8L5.8 267.2Z"/><path d="M5.8 271L12.2 274.8L18.6 271"/></g>
<g transform="translate(0,0)" fill="none" stroke="#e4e4e4" stroke-width="1.2" stroke-linecap="round" stroke-linejoin="round"><path d="M18.66 291.7L18.66 293.1L17.29 293.85L16.86 294.91L17.29 296.4L16.3 297.39L14.81 296.96L13.75 297.39L13 298.76L11.6 298.76L10.85 297.39L9.79 296.96L8.3 297.39L7.31 296.4L7.74 294.91L7.31 293.85L5.94 293.1L5.94 291.7L7.31 290.95L7.74 289.89L7.31 288.4L8.3 287.41L9.79 287.84L10.85 287.41L11.6 286.04L13 286.04L13.75 287.41L14.81 287.84L16.3 287.41L17.29 288.4L16.86 289.89L17.29 290.95Z"/><circle cx="12.3" cy="292.4" r="2.9"/></g>
<g transform="translate(0,0)" ><path d="M6.2 323.6V317.4L8 310.6H16.8L18.8 317.4V323.6Z" fill="#cfcfcf" stroke="none"/><path d="M9 312H15.8L16.8 316.6H8Z" fill="#3a3a3a"/><rect x="10.4" y="312.8" width="4.2" height="2.4" fill="#d8d8d8"/></g>
<g transform="translate(0,0)" fill="none" stroke="#e4e4e4" stroke-width="1.2" stroke-linecap="round" stroke-linejoin="round"><rect x="5.9" y="338.8" width="13" height="8.2" rx="1"/><path d="M9.6 338.6V336.6H15.2V338.6M5.9 342.4H18.9"/><rect x="11.2" y="341.4" width="2.4" height="2" fill="#e4e4e4" stroke="none"/></g>
<rect x="0" y="353.5" width="24.4" height="23.6" fill="#1a6096"/>
<g transform="translate(0,0)" fill="none" stroke="#b9d6ee" stroke-width="1.1" stroke-linejoin="round"><path d="M6.2 363.6L13.4 359.6L18.6 362.2V368.6L11.8 371.2L6.2 369.4Z M8.6 370.2V366.6H11.6V371"/></g>
<rect x="979" y="42" width="23" height="1.4" fill="#4e4e4e"/>
<g transform="translate(0,0)" fill="none" stroke="#e4e4e4" stroke-width="1.2" stroke-linecap="round" stroke-linejoin="round"><rect x="984" y="51.6" width="12.8" height="11.8" stroke-width="1.3"/></g>
<text x="990.4" y="60.6" font-family="Liberation Sans, sans-serif" font-size="8" font-weight="700" fill="#e4e4e4" text-anchor="middle">A</text>
<g transform="translate(0,0)" fill="none" stroke="#e4e4e4" stroke-width="1.2" stroke-linecap="round" stroke-linejoin="round"><path d="M984.8 87.4L988.4 82.6L991 87.2Z" stroke="#e4e4e4" stroke-width="1.1"/><path d="M992.4 75.4L987.4 83M989.6 79.8C991.6 83 994.4 84.4 997.6 84.4M988 82.8C990.4 85.4 992.8 86.6 995.6 86.8" stroke="#b3993b" stroke-width="1.4"/></g>
<g transform="translate(0,0)" fill="none" stroke="#e4e4e4" stroke-width="1.2" stroke-linecap="round" stroke-linejoin="round"><path d="M985.8 110.2L992.4 99.2L991.2 105.4L996.8 104.4L988.2 110.6Z" fill="#24629f" stroke="#24629f" stroke-width="1.3"/><path d="M984.6 111.4L986.4 110" stroke="#ffffff" stroke-width="1.9"/></g>
<g transform="translate(0,0)" fill="none" stroke="#e4e4e4" stroke-width="1.2" stroke-linecap="round" stroke-linejoin="round"><rect x="983.8" y="123.4" width="10.2" height="5.6"/><path d="M992 129V131.4L996.4 133"/><path d="M983.4 134.8q1.1 -1.8 2.2 0q1.1 -1.8 2.2 0q1.1 -1.8 2.2 0q1.1 -1.8 2.2 0q1.1 -1.8 2.2 0q1.1 -1.8 2.2 0" stroke-width="1"/></g>
<g transform="translate(0,0)" fill="none" stroke="#e4e4e4" stroke-width="1.2" stroke-linecap="round" stroke-linejoin="round"><path d="M995.6 153.2A2 2 0 0 1 994.38 156.54A2 2 0 0 1 991.3 158.32A2 2 0 0 1 987.8 157.7A2 2 0 0 1 985.51 154.98A2 2 0 0 1 985.51 151.42A2 2 0 0 1 987.8 148.7A2 2 0 0 1 991.3 148.08A2 2 0 0 1 994.38 149.86A2 2 0 0 1 995.6 153.2Z"/></g>
<g transform="translate(0,0)" fill="none" stroke="#e4e4e4" stroke-width="1.2" stroke-linecap="round" stroke-linejoin="round"><rect x="983.8" y="172.2" width="10.8" height="5.6"/><path d="M994.6 176.4H996.6V180L993 183"/><circle cx="992.2" cy="183.6" r="1.1" fill="#fff" stroke="none"/></g>
<g transform="translate(0,0)" fill="none" stroke="#e4e4e4" stroke-width="1.2" stroke-linecap="round" stroke-linejoin="round"><path d="M986.6 203.4C987.6 201 987 199.6 986.6 198.6A2.4 2.4 0 1 1 990.6 198.6C990.2 199.6 989.6 201 990.6 203.4H994.4V205.6H982.6V203.4Z M982.6 207.4H994.4"/><path d="M997.4 201.2L999.6 203.2L1001.8 201.2"/></g>
<g transform="translate(0,0)" fill="none" stroke="#e4e4e4" stroke-width="1.2" stroke-linecap="round" stroke-linejoin="round"><rect x="984.6" y="221" width="11.6" height="10.2"/><path d="M985 229.4L988.4 226.2L990.6 228L993.4 225.2L996 228"/><circle cx="988.4" cy="223.8" r="0.9" fill="#e4e4e4"/></g>
<g transform="translate(0,0)" fill="none" stroke="#e4e4e4" stroke-width="1.2" stroke-linecap="round" stroke-linejoin="round"><rect x="986.2" y="246.4" width="11" height="10.6" stroke-dasharray="1.6 1.5" stroke-linecap="butt"/><path d="M983.6 246.2H989M986.2 243.6V249" stroke-width="1.3"/></g>
<rect x="978.4" y="264.6" width="20.4" height="1" fill="#4c4c4c"/>
<g transform="translate(0,0)" fill="none" stroke="#e4e4e4" stroke-width="1.2" stroke-linecap="round" stroke-linejoin="round"><path d="M982.6 285.2L994.6 273.4"/></g>
<g transform="translate(0,0)" fill="none" stroke="#e4e4e4" stroke-width="1.2" stroke-linecap="round" stroke-linejoin="round"><path d="M982.6 309.4L992.6 299.6"/><path d="M994.8 297.4L989.6 299L993.2 302.6Z" fill="#e4e4e4" stroke-width="0.8"/></g>
<g transform="translate(0,0)" fill="none" stroke="#e4e4e4" stroke-width="1.2" stroke-linecap="round" stroke-linejoin="round"><path d="M982.2 334.6C983 327.6 987.6 322.6 994.6 322"/></g>
<g transform="translate(0,0)" fill="none" stroke="#e4e4e4" stroke-width="1.2" stroke-linecap="round" stroke-linejoin="round"><path d="M982.2 358.2L984.8 352.4L987.8 354.8L989.4 348.6L992.4 350.8L994.6 345.8"/></g>
<g transform="translate(0,0)" fill="none" stroke="#e4e4e4" stroke-width="1.2" stroke-linecap="round" stroke-linejoin="round"><path d="M982.8 376.6H994.6M982.8 374V379.2M994.6 374V379.2"/><path d="M982.8 376.6L985 375.2V378ZM994.6 376.6L992.4 375.2V378Z" fill="#e4e4e4" stroke-width="0.6"/></g>
<g transform="translate(0,0)" fill="none" stroke="#e4e4e4" stroke-width="1.2" stroke-linecap="round" stroke-linejoin="round"><rect x="982.4" y="395.6" width="12.4" height="9.6"/></g>
<g transform="translate(0,0)" fill="none" stroke="#e4e4e4" stroke-width="1.2" stroke-linecap="round" stroke-linejoin="round"><ellipse cx="988.4" cy="424.4" rx="6.3" ry="4.5"/></g>
<g transform="translate(0,0)" fill="none" stroke="#e4e4e4" stroke-width="1.2" stroke-linecap="round" stroke-linejoin="round"><path d="M982.4 442.8H991.4L988.6 447.4L994.6 454.4H982.4Z"/></g>
<path d="M982.4 466.6V479.6M981.6 466.8H995.4" stroke="#6f63c8" stroke-width="1.6" stroke-dasharray="1 0.9" fill="none"/>
<g transform="translate(0,0)" fill="none" stroke="#e4e4e4" stroke-width="1.2" stroke-linecap="round" stroke-linejoin="round"><path d="M985.6 478.6V473.4L989.6 470.2H994.4V478.6Z"/><circle cx="985.6" cy="478.6" r="1" fill="#fff"/><circle cx="985.6" cy="473.4" r="1" fill="#fff"/><circle cx="994.4" cy="478.6" r="1" fill="#fff"/><circle cx="994.4" cy="470.2" r="1" fill="#fff"/></g>
<path d="M982.2 490.6V503.6M981.4 490.8H995.2" stroke="#6f63c8" stroke-width="1.6" stroke-dasharray="1 0.9" fill="none"/>
<g transform="translate(0,0)" fill="none" stroke="#e4e4e4" stroke-width="1.2" stroke-linecap="round" stroke-linejoin="round"><path d="M985.4 503.4V498L990.6 493.6H995V503.4Z"/></g>
<path d="M982.2 514.8V527.8M981.4 515H995.2" stroke="#6f63c8" stroke-width="1.6" stroke-dasharray="1 0.9" fill="none"/>
<g transform="translate(0,0)" fill="none" stroke="#e4e4e4" stroke-width="1.2" stroke-linecap="round" stroke-linejoin="round"><path d="M985.4 523.4H995M985.4 520.4V526.4M995 520.4V526.4"/><path d="M986 523.4L988.4 522V524.8ZM994.4 523.4L992 522V524.8Z" fill="#e4e4e4" stroke-width="0.5"/></g>
<path d="M982.2 539.2V552.2M981.4 539.4H995.2" stroke="#6f63c8" stroke-width="1.6" stroke-dasharray="1 0.9" fill="none"/>
<g transform="translate(0,0)" fill="none" stroke="#e4e4e4" stroke-width="1.2" stroke-linecap="round" stroke-linejoin="round"><path d="M987 544.4V551M989.4 544.4V551M991.8 544.4V551M994.2 544.4V551M984.6 549.6L996 545.6" stroke-width="1.1"/></g>
<rect x="0" y="586.2" width="24.4" height="24.8" fill="#1a6096"/>
<path d="M9.4 595.2H18.2M9.4 598.7H18.2M9.4 602.2H18.2" stroke="#fff" stroke-width="1.5" fill="none"/>
<path d="M6.2 595.2H7.6M6.2 598.7H7.6M6.2 602.2H7.6" stroke="#fff" stroke-width="1.5" fill="none"/>
<rect x="30.8" y="593.4" width="11" height="10.6" fill="none" stroke="#4c4c4c" stroke-width="1.2"/><path d="M31 597H41.6M31 600.4H41.6" stroke="#3c3c3c" stroke-width="1" fill="none"/>
<g transform="translate(0,0)" fill="none" stroke="#e4e4e4" stroke-width="1.2" stroke-linecap="round" stroke-linejoin="round"><rect x="54.6" y="593.4" width="11.6" height="10.8"/><path d="M60.4 593.4V604.2"/></g>
<g transform="translate(0,0)" fill="none" stroke="#e4e4e4" stroke-width="1.2" stroke-linecap="round" stroke-linejoin="round"><rect x="78.6" y="593.4" width="12" height="10.8"/><path d="M78.6 598H90.6M78.6 599.6H90.6"/></g>
<rect x="98" y="592.4" width="1" height="13" fill="#5a5a5a"/>
<g transform="translate(0,0)" fill="none" stroke="#e4e4e4" stroke-width="1.2" stroke-linecap="round" stroke-linejoin="round"><path d="M107.6 593H113.8L117 596.2V604.8H107.6Z"/><path d="M113.6 593.2V596.4H116.8" stroke-width="0.9"/><path d="M112.3 597.6V603.2M109.4 600.4H115.2" stroke-width="0.9"/><path d="M112.3 597.2L111.2 598.6H113.4ZM112.3 603.8L111.2 602.4H113.4ZM109 600.4L110.4 599.4V601.4ZM115.6 600.4L114.2 599.4V601.4Z" fill="#e4e4e4" stroke="none"/></g>
<g transform="translate(0,0)" fill="none" stroke="#e4e4e4" stroke-width="1.2" stroke-linecap="round" stroke-linejoin="round"><path d="M131 593V595.4M142 593V595.4M131 594.2H142"/><path d="M131.8 605V597H138.4L141.6 600V605"/><path d="M131 602.4H142" stroke-width="0.9"/><path d="M130.8 602.4L132.6 601.2V603.6ZM142.2 602.4L140.4 601.2V603.6Z" fill="#e4e4e4" stroke="none"/></g>
<g transform="translate(0,0)" fill="none" stroke="#e4e4e4" stroke-width="1.2" stroke-linecap="round" stroke-linejoin="round"><path d="M268.6 600.6L266.4 598.2C265.6 597.2 266.8 596 267.8 597L269.2 598.6V594.4C269.2 593.2 270.8 593.2 270.8 594.4V593.6C270.8 592.4 272.4 592.4 272.4 593.6V594C272.4 592.8 274 592.8 274 594V595C274 594 275.6 594 275.6 595V600.4C275.6 602.6 274.6 604.4 272.8 604.4H271.4C270 604.4 269.2 603.2 268.6 600.6Z" stroke-width="1.05"/><path d="M270.8 594.4V597.6M272.4 594V597.6M274 595V597.8" stroke-width="0.9"/></g>
<g transform="translate(0,0)" fill="none" stroke="#e4e4e4" stroke-width="1.2" stroke-linecap="round" stroke-linejoin="round"><path d="M292.6 593V603.2L295 601L297 605L298.6 604.2L296.8 600.4H300.2Z" stroke-width="1.05"/></g>
<g transform="translate(0,0)" fill="none" stroke="#e4e4e4" stroke-width="1.2" stroke-linecap="round" stroke-linejoin="round"><path d="M315 593H319M315 604.8H319M317 593V604.8" stroke-width="1.1"/></g>
<text x="322.4" y="603.6" font-family="Liberation Sans, sans-serif" font-size="7" font-weight="700" fill="#e4e4e4" text-anchor="middle">A</text>
<g transform="translate(0,0)" fill="none" stroke="#e4e4e4" stroke-width="1.2" stroke-linecap="round" stroke-linejoin="round"><circle cx="342.4" cy="597.2" r="4.5"/><path d="M345.8 600.6L350.6 605.2" stroke-width="1.4"/><path d="M342.4 594.8V597.6M340.6 599H344.2" stroke-width="0.9"/><path d="M342.4 594.4L341.2 596.2H343.6Z" fill="#e4e4e4" stroke="none"/></g>
<path d="M365.6 595.4V602.4M371.6 595.6L367.2 598.9L371.6 602.2Z" fill="none" stroke="#4e4e4e" stroke-width="1.1" stroke-linejoin="round"/>
<path d="M395.6 595.6L391.2 598.9L395.6 602.2Z" fill="none" stroke="#4e4e4e" stroke-width="1.1" stroke-linejoin="round"/>
<rect x="405.6" y="592.8" width="171.2" height="12.6" rx="1" fill="#2b2b2b" stroke="#767676" stroke-width="1"/>
<path d="M587 595.6L591.4 598.9L587 602.2Z" fill="none" stroke="#4e4e4e" stroke-width="1.1" stroke-linejoin="round"/>
<path d="M616.6 595.4V602.4M610.6 595.6L615 598.9L610.6 602.2Z" fill="none" stroke="#4e4e4e" stroke-width="1.1" stroke-linejoin="round"/>
<rect x="626.4" y="592.2" width="1" height="13" fill="#5a5a5a"/>
<g transform="translate(0,0)" fill="none" stroke="#e4e4e4" stroke-width="1.2" stroke-linecap="round" stroke-linejoin="round"><circle cx="640.4" cy="598.7" r="6.3"/><path d="M642.4 595.8L637.8 598.7L642.4 601.6Z" stroke-width="1"/></g>
<circle cx="664.2" cy="598.7" r="6.1" fill="none" stroke="#4e4e4e" stroke-width="1.1" stroke-linejoin="round"/><path d="M662.4 595.8L667 598.7L662.4 601.6Z" fill="none" stroke="#4e4e4e" stroke-width="1.1" stroke-linejoin="round"/>
<path d="M612.6 616.8V628.8M616 616.8V628.8M619.4 616.8V628.8M610 619.4H622M610 622.8H622M610 626.2H622" stroke="#f0f0f0" stroke-width="1.35" fill="none"/>
<rect x="628.4" y="612.4" width="72.2" height="23.6" fill="#1a6096"/>
<rect x="725.2" y="612.4" width="24" height="23.6" fill="#1a6096"/>
<path d="M635.7 617V628.6M643.5 617V620.6M633.6 619.8H646.2M633.6 622.9H639.4M633.6 626H639" stroke="#f4f4f4" stroke-width="1.15" fill="none"/>
<path d="M646.4 622.5C644.8 621.1 641.1 621.1 641.1 623.5C641.1 625.8 646.5 624.7 646.5 627.2C646.5 629.5 641.9 629.5 640.5 628.1" fill="none" stroke="#ffffff" stroke-width="1.7" stroke-linecap="round"/>
<path d="M664.6 629H659.8V618H665.2L668 620.6" fill="none" stroke="#f4f4f4" stroke-width="1.15" stroke-linecap="round" stroke-linejoin="round"/>
<path d="M670.4 622.5C668.8 621.1 665.1 621.1 665.1 623.5C665.1 625.8 670.5 624.7 670.5 627.2C670.5 629.5 665.9 629.5 664.5 628.1" fill="none" stroke="#ffffff" stroke-width="1.7" stroke-linecap="round"/>
<path d="M683.4 628.6L684.6 625L691.8 617.8L695 620.8" fill="none" stroke="#f4f4f4" stroke-width="1.15" stroke-linecap="round" stroke-linejoin="round"/><path d="M683 629L686 627.6" fill="none" stroke="#f4f4f4" stroke-width="1.15" stroke-linecap="round" stroke-linejoin="round"/>
<path d="M694.4 622.7C692.8 621.3 689.1 621.3 689.1 623.7C689.1 626 694.5 624.9 694.5 627.4C694.5 629.7 689.9 629.7 688.5 628.3" fill="none" stroke="#ffffff" stroke-width="1.7" stroke-linecap="round"/>
<path d="M705.6 628.2L706.8 624.6L713.6 617L716.4 619.4L709.6 627Z M705.2 629L707.2 628" fill="none" stroke="#f4f4f4" stroke-width="1.15" stroke-linecap="round" stroke-linejoin="round"/>
<circle cx="717" cy="626.6" r="2.9" fill="none" stroke="#2f7fca" stroke-width="1.3"/><path d="M717 621.6V623.6" stroke="#2f7fca" stroke-width="1.2"/>
<rect x="730.8" y="617.4" width="12.8" height="12" fill="none" stroke="#f4f4f4" stroke-width="1.15" stroke-linecap="round" stroke-linejoin="round"/>
<path d="M730.8 619.8H743.6" fill="none" stroke="#f4f4f4" stroke-width="1.15" stroke-linecap="round" stroke-linejoin="round"/>
<path d="M733.6 623.4H740.6L739 622M740.6 626.6H733.6L735.2 628" fill="none" stroke="#f4f4f4" stroke-width="1.15" stroke-linecap="round" stroke-linejoin="round"/>
<path d="M751.4 622L754.2 624.8L757 622" stroke="#f0f0f0" stroke-width="1.3" fill="none"/>
</svg>
<span class="ut" id="m0" style="left:12.7px;top:3px;font-size:9px;font-weight:400;color:#f0f0f0;transform:scaleX(0.9564)">Revu</span>
<span class="ut" id="m1" style="left:52.7px;top:3px;font-size:9px;font-weight:400;color:#f0f0f0;transform:scaleX(1.0196)">File</span>
<span class="ut" id="m2" style="left:87.5px;top:3px;font-size:9px;font-weight:400;color:#f0f0f0;transform:scaleX(0.9668)">Edit</span>
<span class="ut" id="m3" style="left:122px;top:3px;font-size:9px;font-weight:400;color:#f0f0f0;transform:scaleX(1.0331)">View</span>
<span class="ut" id="m4" style="left:160.4px;top:3px;font-size:9px;font-weight:400;color:#f0f0f0;transform:scaleX(1.0382)">Document</span>
<span class="ut" id="m5" style="left:221.6px;top:3px;font-size:9px;font-weight:400;color:#f0f0f0;transform:scaleX(1.0297)">Batch</span>
<span class="ut" id="m6" style="left:264.4px;top:3px;font-size:9px;font-weight:400;color:#f0f0f0;transform:scaleX(1.0421)">Tools</span>
<span class="ut" id="m7" style="left:305.5px;top:3px;font-size:9px;font-weight:400;color:#f0f0f0;transform:scaleX(1.0245)">Window</span>
<span class="ut" id="m8" style="left:357.7px;top:3px;font-size:9px;font-weight:400;color:#f0f0f0;transform:scaleX(1.0100)">Help</span>
<span class="ut" id="em" style="left:789.8px;top:2.8px;font-size:8.4px;font-weight:700;color:#ffffff;transform:scaleX(0.9417)">taimoor@brightergraphics.com</span>
<span class="ut" id="t0" style="left:43.4px;top:23px;font-size:8.2px;font-weight:700;color:#ffffff;transform:scaleX(1.0027)">Name:</span>
<span class="ut" id="t1" style="left:70px;top:23px;font-size:8.2px;font-weight:400;color:#e6e6e6;transform:scaleX(0.9729)">Brighter Graphics - Floor Plan 1</span>
<span class="ut" id="t2" style="left:189.8px;top:23px;font-size:8.2px;font-weight:700;color:#ffffff;transform:scaleX(0.9755)">Pages:</span>
<span class="ut" id="t3" style="left:218.6px;top:23px;font-size:8.2px;font-weight:400;color:#e6e6e6;transform:scaleX(0.6575)">1</span>
<span class="ut" id="tabt" style="left:30.8px;top:47.7px;font-size:8.4px;font-weight:400;color:#f0f0f0;transform:scaleX(0.9626)">Brighter Graphics - Floor Plan 1*</span>
<span class="ut" id="pg" style="left:458.3px;top:594.9px;font-size:8.6px;font-weight:400;color:#f0f0f0;transform:scaleX(0.9465)">Floor Plan (1 of 1)</span>
<span class="ut" id="n1" style="left:810.2px;top:595.2px;font-size:9.2px;font-weight:400;color:#f0f0f0;transform:scaleX(0.9816)">106.68 x 76.20 cm</span>
<span class="ut" id="n2" style="left:898.8px;top:595.2px;font-size:9.2px;font-weight:400;color:#f0f0f0;transform:scaleX(0.9795)">9.525 cm = 30'-0"</span>
<span class="ut" id="s0" style="left:0.7px;top:619.1px;font-size:8.4px;font-weight:400;color:#f0f0f0;transform:scaleX(0.9921)">Select region to copy text</span>
<span class="ut" id="s1" style="left:774.4px;top:619.15px;font-size:8.3px;font-weight:400;color:#f0f0f0;transform:scaleX(0.9611)">9.525 cm = 30'-0"</span>
<span class="ut" id="s2" style="left:852.8px;top:619.15px;font-size:8.3px;font-weight:400;color:#f0f0f0;transform:scaleX(0.9844)">106.68 x 76.20 cm</span>
<span class="ut" id="s3" style="left:942.8px;top:619.15px;font-size:8.3px;font-weight:400;color:#f0f0f0;transform:scaleX(0.9967)">(56.41, 57.29)</span>
</body></html>
